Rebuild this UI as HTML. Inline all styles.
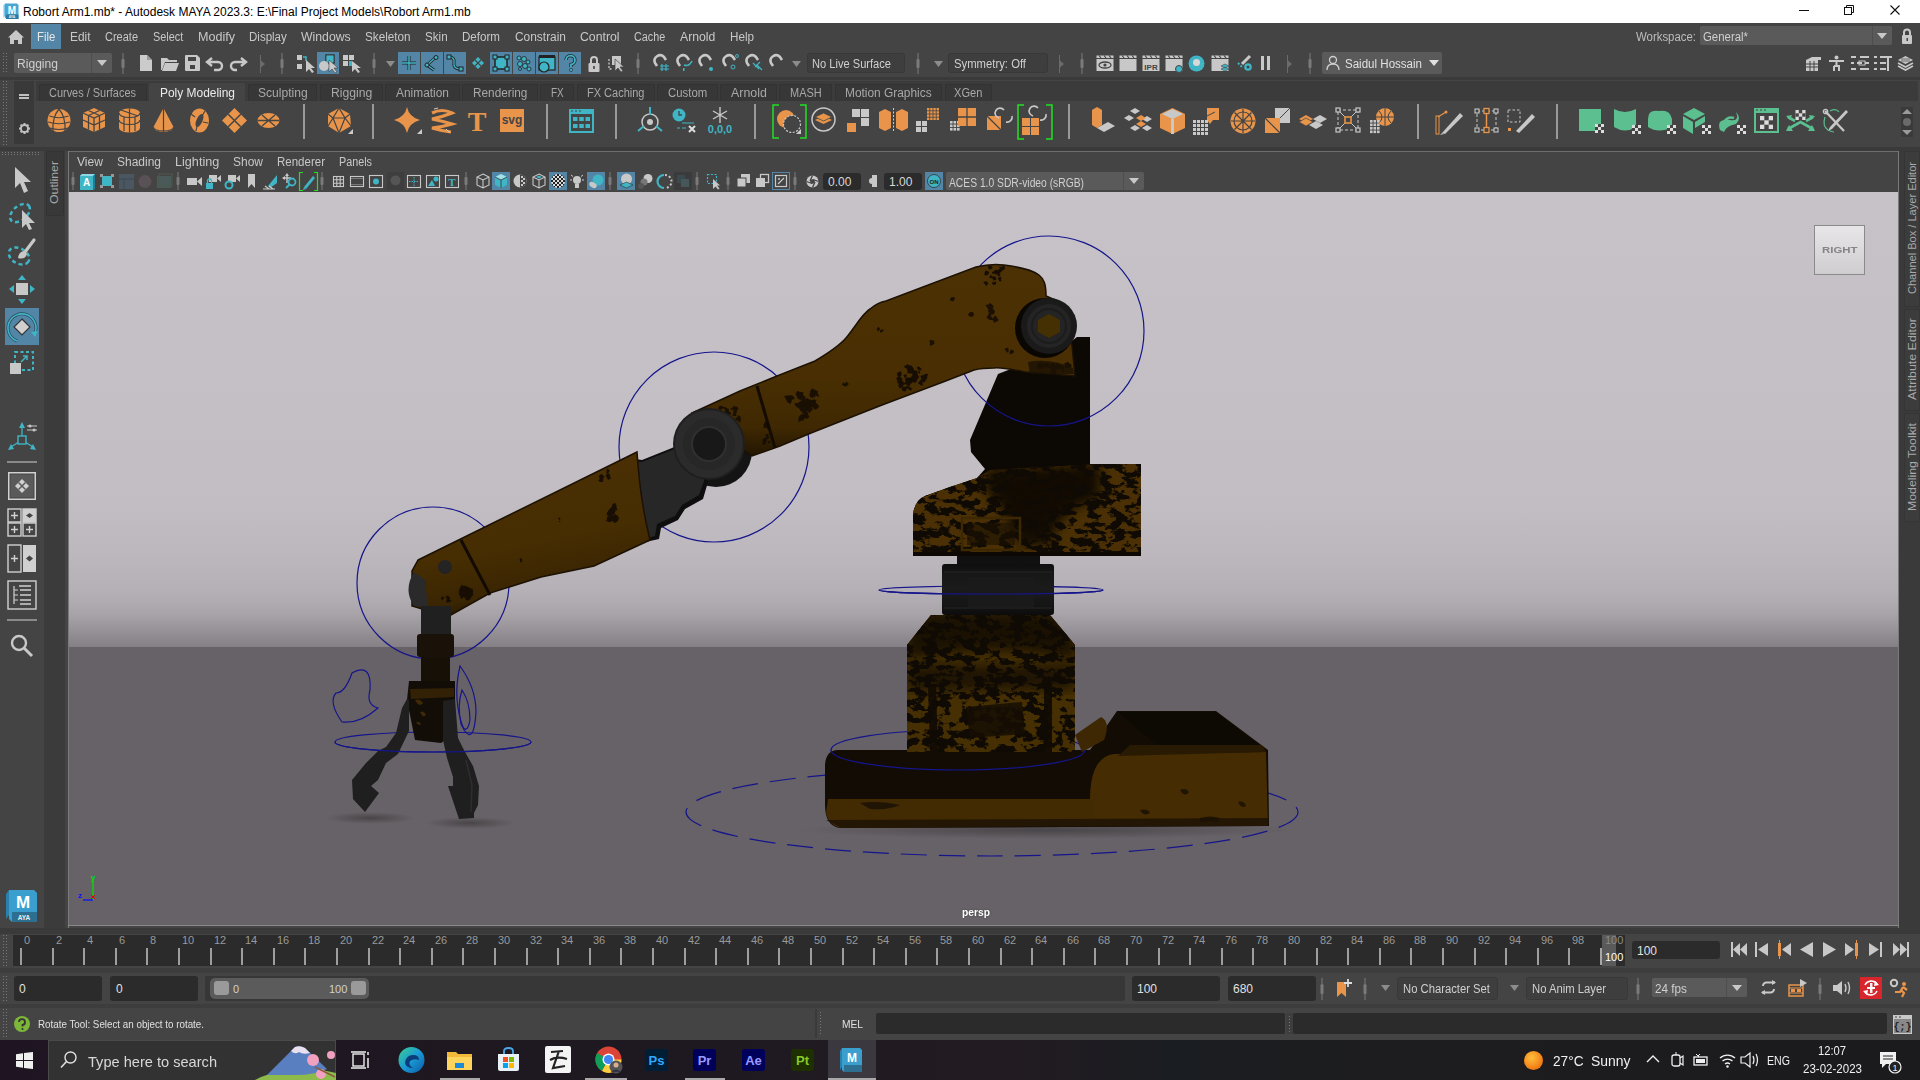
<!DOCTYPE html>
<html><head><meta charset="utf-8">
<style>
*{margin:0;padding:0;box-sizing:border-box}
html,body{width:1920px;height:1080px;overflow:hidden;background:#444;font-family:"Liberation Sans",sans-serif;}
.a{position:absolute}
.t{white-space:nowrap}
svg{display:block;overflow:visible}
</style></head><body>
<div class="a" style="left:0px;top:0px;width:1920px;height:23px;background:#fff;"></div><div class="a" style="left:0px;top:23px;width:1920px;height:55px;background:#444;"></div><div class="a" style="left:0px;top:77px;width:1920px;height:3px;background:#3a3a3a;"></div><div class="a" style="left:0px;top:80px;width:1920px;height:67px;background:#444;"></div><div class="a" style="left:0px;top:147px;width:1920px;height:4px;background:#3a3a3a;"></div><div class="a" style="left:36px;top:81px;width:1882px;height:20px;background:#3b3b3b;"></div><div class="a" style="left:14px;top:81px;width:20px;height:63px;background:#393939;"></div><div class="a" style="left:0px;top:151px;width:43px;height:777px;background:#444;"></div><div class="a" style="left:44px;top:151px;width:21px;height:777px;background:#3b3b3b;"></div><div class="a" style="left:65px;top:151px;width:3px;height:777px;background:#444;"></div><div class="a" style="left:68px;top:151px;width:1832px;height:41px;background:#444;"></div><div class="a" style="left:68px;top:151px;width:1831px;height:1px;background:#6e6e6e;"></div><div class="a" style="left:69px;top:192px;width:1829px;height:455px;background:linear-gradient(#c7c2c7 0px,#c3bec3 300px,#bdb8bd 360px,#b5b0b5 400px,#aaa5aa 420px,#9c979c 434px,#8c878c 448px,#858085 455px)"></div><div class="a" style="left:69px;top:647px;width:1829px;height:278px;background:#676267;"></div><svg class="a" style="left:0;top:0" width="1920" height="1080" viewBox="0 0 1920 1080">
<defs>
<linearGradient id="armg" x1="0" y1="0" x2="0" y2="1">
<stop offset="0" stop-color="#4c3104"/><stop offset="0.6" stop-color="#482e02"/><stop offset="0.85" stop-color="#3f2802"/><stop offset="1" stop-color="#221602"/>
</linearGradient>
<linearGradient id="fg" x1="0" y1="0" x2="0.3" y2="1">
<stop offset="0" stop-color="#4c3104"/><stop offset="0.65" stop-color="#462d02"/><stop offset="0.9" stop-color="#3a2502"/><stop offset="1" stop-color="#221602"/>
</linearGradient>
<linearGradient id="ringg" x1="0" y1="0" x2="0" y2="1">
<stop offset="0" stop-color="#0e0e0e"/><stop offset="0.2" stop-color="#171717"/><stop offset="0.5" stop-color="#1b1b1b"/><stop offset="0.8" stop-color="#151515"/><stop offset="1" stop-color="#0c0c0c"/>
</linearGradient>
<radialGradient id="shad" cx="0.5" cy="0.5" r="0.5"><stop offset="0" stop-color="#000" stop-opacity="0.3"/><stop offset="1" stop-color="#000" stop-opacity="0"/></radialGradient>
<filter id="grm1" x="0" y="0" width="1" height="1" filterUnits="objectBoundingBox" color-interpolation-filters="sRGB">
<feTurbulence type="fractalNoise" baseFrequency="0.08 0.13" numOctaves="4" seed="7" result="n"/>
<feColorMatrix in="n" type="matrix" values="0 0 0 0 0.06  0 0 0 0 0.04  0 0 0 0 0.01  -13 0 0 0 6.9"/>
<feComposite in2="SourceGraphic" operator="in"/>
</filter>
<filter id="grm2" x="0" y="0" width="1" height="1" filterUnits="objectBoundingBox" color-interpolation-filters="sRGB">
<feTurbulence type="fractalNoise" baseFrequency="0.08 0.13" numOctaves="4" seed="3" result="n"/>
<feColorMatrix in="n" type="matrix" values="0 0 0 0 0.06  0 0 0 0 0.04  0 0 0 0 0.01  -13 0 0 0 6.9"/>
<feComposite in2="SourceGraphic" operator="in"/>
</filter>
<filter id="soft" x="-0.2" y="-0.2" width="1.4" height="1.4" color-interpolation-filters="sRGB"><feGaussianBlur stdDeviation="6"/></filter>
<clipPath id="vpclip"><rect x="69" y="192" width="1829" height="733"/></clipPath>
</defs>
<g clip-path="url(#vpclip)">
<ellipse cx="370" cy="818" rx="45" ry="6" fill="url(#shad)"/>
<ellipse cx="470" cy="823" rx="45" ry="6" fill="url(#shad)"/>
<ellipse cx="1045" cy="830" rx="250" ry="9" fill="url(#shad)"/>
<g fill="none" stroke="#15158c" stroke-width="1.2">
<circle cx="714" cy="447" r="95"/>
<circle cx="433" cy="583" r="76"/>
<ellipse cx="992" cy="812" rx="306" ry="44" stroke-dasharray="26 12"/>
<ellipse cx="958" cy="750" rx="127" ry="20"/>
<ellipse cx="991" cy="590" rx="112" ry="4"/>
<ellipse cx="433" cy="742" rx="98" ry="10"/>
<path d="M352 673 Q372 662 370 690 Q366 705 378 708 Q360 724 342 722 Q328 702 336 693 Q345 693 352 673 Z"/>
<path d="M460 666 Q476 688 476 712 Q474 745 464 730 Q452 700 460 666 Z"/><path d="M462 690 Q470 702 470 720 Q467 736 461 724 Q457 705 462 690 Z"/>
</g>
<!-- base plate -->
<path d="M838 750 L1090 750 L1117 711 L1216 711 L1268 750 L1269 826 L840 828 Q825 826 825 805 L825 765 Q826 750 838 750 Z" fill="#120c04"/>
<path d="M1090 800 Q1090 757 1114 754 L1266 752 L1268 826 L1090 826 Z" fill="#452c02"/>
<path d="M828 799 L1095 799 L1095 826 L842 828 Q828 826 826 812 Z" fill="#422a02"/>
<path d="M826 820 L1268 818 L1268 826 L842 828 Z" fill="#1c1206" opacity="0.8"/>
<path d="M1118 712 L1215 712 L1262 748 L1160 748 Z" fill="#0d0903"/>
<path d="M1130 745 L1262 745 L1266 752 L1118 756 Z" fill="#281a03"/>
<path d="M1075 735 L1101 717 Q1111 722 1104 740 L1082 752 Z" fill="#3e2803"/>
<path d="M860 803 Q880 800 900 805 Q890 810 870 809 Z M1180 790 q6 -3 9 2 q-4 6 -9 -2 Z M1238 802 q6 -2 8 4 q-5 3 -8 -4 Z M1140 810 q8 -2 10 3 q-6 4 -10 -3 Z M1200 818 q10 -3 20 0 l-2 4 q-8 -2 -18 0 Z" fill="#1a1005" opacity="0.85"/>
<!-- column -->
<path d="M931 615 L1050 615 L1075 645 L1075 752 L907 752 L907 645 Z" fill="#140d05"/>
<clipPath id="colc"><path d="M931 615 L1050 615 L1075 645 L1075 752 L907 752 L907 645 Z"/></clipPath>
<g clip-path="url(#colc)">
<rect x="907" y="612" width="168" height="140" fill="#463003"/>
<path d="M907 612 H1075 V660 Q990 640 907 660 Z" fill="#100a03" filter="url(#soft)" opacity="0.8"/>
<path d="M907 665 H1075 V690 H907 Z" fill="#100a03" filter="url(#soft)" opacity="0.7"/>
<rect x="907" y="612" width="168" height="140" fill="#000" filter="url(#grm2)"/>
<path d="M928 684 L936 684 L938 752 L930 752 Z M1044 684 L1052 684 L1052 752 L1044 752 Z" fill="#0f0a03" opacity="0.9"/>
<path d="M966 707 L1022 702 L1025 734 L970 738 Z" fill="#160e04" opacity="0.85"/>
</g>
<path d="M831 750 A127 20 0 0 0 1085 750" fill="none" stroke="#15158c" stroke-width="1.2"/>
<!-- ring -->
<rect x="942" y="564" width="112" height="51" rx="3" fill="url(#ringg)"/>
<rect x="957" y="555" width="83" height="10" fill="#101010"/>
<rect x="968" y="577" width="66" height="30" fill="#1a1a1a"/>
<path d="M944 572 H1052 M944 608 H1052" stroke="#262626" stroke-width="1"/>
<path d="M879 590 A112 4 0 0 0 1103 590" fill="none" stroke="#15158c" stroke-width="1.2"/>
<!-- shoulder block -->
<path d="M913 514 Q915 500 925 496 L950 487 L977 478 L985 469 L971 452 L970 440 L998 374 L1060 350 L1077 337 L1090 337 L1090 464 L1141 464 L1141 556 L913 556 Z" fill="#0c0804"/>
<clipPath id="blk"><path d="M913 514 Q915 500 925 496 L950 487 L977 478 L990 470 L1100 464 L1141 464 L1141 556 L913 556 Z"/></clipPath>
<g clip-path="url(#blk)">
<rect x="910" y="460" width="235" height="100" fill="#4a3004"/>
<path d="M985 470 L1100 464 L1100 500 Q1060 505 1050 545 L1020 545 Q1000 500 985 490 Z" fill="#100a03" filter="url(#soft)" opacity="0.95"/>
<rect x="910" y="460" width="235" height="100" fill="#000" filter="url(#grm1)"/>
<rect x="962" y="518" width="58" height="32" fill="none" stroke="#3e2803" stroke-width="2.5"/>
<rect x="967" y="523" width="48" height="22" fill="#1a1104" opacity="0.6"/>
<path d="M913 552 H1141 V556 H913 Z" fill="#0d0803"/>
</g>
<circle cx="1049" cy="331" r="95" fill="none" stroke="#15158c" stroke-width="1.2"/>
<circle cx="716" cy="451" r="36" fill="#141414"/>
<!-- upper arm -->
<path d="M692 413 L740 391 L777 376 L815 361 C830 352 840 345 846 338 C856 326 862 314 870 309 C876 304 880 302 886 301 L923 287 L976 267 C988 264 996 264 1004 265 C1020 267 1032 270 1039 275 C1044 279 1046 284 1046 296 L1060 302 L1072 345 L1075 376 L1025 372 C1010 369 1000 367 994 368 C985 368 978 369 974 370 L943 382 L882 405 L811 433 L780 446 L752 456 Z" fill="url(#armg)" stroke="#1b1104" stroke-width="1.5"/>
<path d="M757 386 L775 448" stroke="#140c03" stroke-width="3"/>
<path d="M907.2 376.0 L906.2 376.8 L905.6 377.6 L904.3 377.8 L904.1 376.5 L903.4 375.3 L904.4 374.5 L905.6 374.5 L906.6 375.0 ZM917.5 372.9 L918.2 376.2 L915.1 377.6 L913.2 374.7 L911.6 373.9 L910.9 371.7 L911.9 368.9 L914.7 370.4 L917.3 370.4 ZM912.8 382.3 L910.5 383.9 L909.3 386.4 L906.9 385.1 L904.4 383.8 L905.4 381.1 L906.2 378.3 L909.4 377.5 L911.9 379.5 ZM922.3 383.0 L923.3 385.4 L920.9 385.5 L919.7 384.3 L918.2 383.8 L918.2 382.2 L919.5 381.4 L921.1 379.4 L921.8 381.9 ZM923.8 377.1 L923.6 378.0 L922.7 378.1 L921.6 378.7 L920.9 377.7 L920.5 376.3 L921.5 375.4 L922.8 375.2 L924.2 375.7 ZM925.7 379.2 L925.6 381.2 L923.8 382.5 L921.7 381.9 L920.2 380.3 L921.9 378.7 L922.1 377.2 L923.5 377.6 L925.2 377.5 ZM916.5 377.3 L917.1 379.8 L914.7 380.8 L912.9 379.4 L909.7 378.9 L912.2 376.7 L912.5 374.6 L914.7 374.0 L916.8 375.1 ZM927.2 377.1 L927.0 379.2 L924.9 379.4 L922.7 380.4 L921.6 378.2 L920.6 375.7 L923.4 375.3 L925.1 374.0 L928.1 374.1 ZM902.6 379.5 L901.5 381.4 L899.8 382.3 L897.3 382.9 L897.2 380.3 L896.2 378.4 L897.7 376.8 L899.9 376.2 L901.4 377.8 ZM901.7 382.1 L901.4 383.7 L899.8 384.2 L898.6 383.5 L897.2 382.9 L897.9 381.5 L898.7 380.8 L899.8 380.2 L901.0 380.8 ZM919.4 377.2 L918.2 378.3 L917.2 379.4 L916.2 378.2 L915.5 377.6 L914.2 376.2 L916.0 375.8 L917.2 375.2 L917.8 376.3 ZM919.9 372.2 L920.2 373.3 L919.1 373.7 L918.6 372.8 L917.3 372.8 L918.2 372.0 L918.3 371.2 L919.1 371.0 L920.0 371.3 ZM904.8 383.1 L904.5 384.7 L903.0 385.0 L902.2 384.0 L900.8 383.8 L901.1 382.6 L901.6 381.3 L903.1 381.0 L903.6 382.4 ZM917.5 379.2 L916.6 381.6 L914.5 383.3 L912.6 381.2 L909.5 380.7 L910.3 377.9 L911.8 375.8 L914.2 376.8 L916.4 376.9 ZM914.2 369.5 L912.2 371.7 L910.0 371.6 L907.2 373.8 L907.5 370.3 L906.4 368.3 L907.8 366.4 L910.4 365.1 L912.7 367.0 ZM919.2 376.3 L917.1 378.3 L915.5 380.7 L912.2 380.6 L911.4 377.5 L912.6 375.5 L913.6 374.4 L915.6 371.3 L916.7 374.6 ZM921.1 369.2 L921.5 370.6 L920.1 370.3 L919.1 370.6 L917.9 370.0 L918.3 368.7 L919.4 368.4 L920.1 368.3 L921.5 367.9 ZM909.8 366.8 L908.3 368.1 L907.1 368.4 L905.9 368.3 L904.6 367.6 L904.0 365.8 L906.0 365.5 L907.3 363.9 L908.9 365.0 ZM914.7 373.4 L914.3 374.1 L913.7 374.7 L913.1 374.0 L912.7 373.7 L912.9 373.2 L912.9 372.4 L913.6 372.7 L914.4 372.7 ZM912.5 372.3 L911.5 373.3 L910.5 373.3 L909.5 373.7 L908.6 372.9 L908.9 371.7 L909.3 370.5 L910.7 370.3 L911.7 371.1 ZM901.4 373.8 L901.5 375.4 L900.2 376.5 L898.2 376.4 L896.9 374.8 L897.0 372.9 L898.7 372.2 L900.1 371.3 L901.5 372.3 ZM920.5 367.7 L920.1 368.9 L918.9 368.8 L917.8 369.3 L916.9 368.3 L917.1 367.1 L918.0 366.4 L918.9 366.8 L919.6 366.9 Z" fill="#130b03" opacity="0.92"/><path d="M912.9 379.5 L913.1 381.5 L911.1 381.5 L909.2 382.1 L909.3 380.1 L907.8 378.5 L909.7 377.8 L911.0 378.0 L912.2 378.3 ZM907.4 379.3 L907.3 380.0 L906.8 380.4 L906.0 380.4 L905.4 379.8 L904.8 378.7 L905.9 378.1 L906.9 377.3 L908.2 378.0 ZM911.9 388.5 L911.7 390.1 L910.1 390.4 L909.1 389.6 L907.9 389.1 L907.9 387.8 L909.1 387.3 L910.0 387.3 L910.8 387.6 ZM909.3 387.1 L908.3 387.9 L907.6 388.3 L906.2 389.1 L905.4 387.8 L905.5 386.4 L906.6 385.9 L907.6 385.8 L908.5 386.2 ZM902.0 385.0 L901.5 385.8 L900.8 386.4 L899.7 386.5 L898.9 385.6 L899.6 384.7 L899.6 383.3 L900.9 383.2 L901.9 383.8 ZM906.2 388.5 L906.5 390.3 L905.0 391.5 L903.0 391.0 L901.4 389.6 L902.2 387.7 L903.1 386.2 L904.7 387.1 L906.5 386.8 ZM903.0 386.2 L901.9 387.2 L901.0 387.7 L899.5 388.5 L899.1 386.8 L897.9 385.2 L899.4 383.9 L901.2 383.8 L903.0 384.4 ZM901.7 383.6 L901.7 384.3 L900.9 384.2 L900.3 384.5 L899.6 384.0 L900.1 383.3 L900.5 383.0 L900.9 382.9 L901.7 382.8 Z" fill="#130b03" opacity="0.92"/><path d="M996.1 283.0 L995.9 284.5 L994.4 284.7 L993.1 284.8 L992.2 283.7 L992.0 282.3 L993.6 282.2 L994.3 281.9 L996.0 281.5 ZM998.0 271.7 L997.9 272.9 L996.8 273.8 L995.6 273.2 L995.0 272.2 L994.3 270.9 L995.2 269.5 L996.8 269.9 L998.4 270.1 ZM1001.5 268.0 L1001.9 269.0 L1000.9 269.2 L1000.0 269.1 L999.7 268.3 L999.1 267.4 L999.9 266.6 L1000.9 266.7 L1002.0 266.9 ZM989.1 273.2 L988.5 274.3 L987.4 274.7 L985.6 275.8 L984.0 274.3 L985.7 272.7 L985.9 271.0 L987.6 270.9 L988.9 271.8 ZM988.7 273.9 L987.8 274.4 L987.4 275.0 L986.6 275.0 L986.1 274.3 L986.2 273.6 L986.7 273.0 L987.5 272.4 L987.8 273.4 ZM988.7 272.4 L988.1 273.7 L986.9 273.8 L985.9 273.7 L984.3 273.3 L985.0 271.9 L985.5 270.6 L986.9 270.8 L988.0 271.3 ZM988.4 283.3 L987.6 284.3 L986.9 285.9 L985.4 285.2 L985.2 283.8 L985.1 282.9 L985.1 280.9 L986.7 281.7 L987.8 282.2 ZM986.1 282.7 L985.9 283.7 L985.0 284.0 L984.2 283.7 L983.8 283.1 L983.3 282.2 L984.2 281.9 L985.0 281.3 L986.1 281.6 ZM1001.0 279.1 L1001.5 280.7 L1000.1 281.7 L998.8 280.5 L998.5 279.5 L997.7 278.4 L998.7 277.5 L1000.1 276.6 L1001.4 277.6 ZM992.7 276.6 L992.2 277.8 L991.1 278.5 L990.1 277.7 L988.7 277.3 L989.8 276.2 L990.1 275.4 L991.1 274.8 L991.5 275.9 ZM994.8 272.8 L994.8 273.6 L994.1 274.3 L993.4 273.5 L992.1 273.4 L991.9 272.1 L993.1 271.5 L994.1 271.3 L995.3 271.6 ZM996.5 279.0 L995.9 279.9 L995.0 280.1 L993.7 280.8 L992.9 279.7 L993.9 278.7 L993.7 277.1 L995.2 276.6 L996.0 278.0 ZM1002.1 270.9 L1000.9 272.1 L999.8 272.5 L998.9 272.1 L997.6 271.6 L998.0 270.3 L998.6 269.2 L999.9 268.7 L1000.7 269.9 ZM992.8 267.7 L991.6 268.8 L990.6 269.3 L989.2 269.7 L988.5 268.4 L987.8 266.8 L989.1 265.6 L990.7 265.8 L991.8 266.5 ZM995.2 277.8 L994.6 278.8 L993.8 279.8 L992.6 279.2 L992.4 278.2 L991.7 277.1 L992.7 276.5 L993.7 276.3 L994.9 276.6 ZM1000.4 274.3 L1000.3 275.6 L999.0 276.2 L997.5 276.2 L997.8 274.6 L997.2 273.7 L998.0 273.1 L998.9 272.9 L999.7 273.4 Z" fill="#130b03" opacity="0.92"/><path d="M1004.8 267.8 L1005.0 269.2 L1003.5 269.2 L1002.6 269.1 L1001.8 268.4 L1002.0 267.4 L1002.2 266.0 L1003.7 265.8 L1004.7 266.6 ZM998.1 272.9 L997.7 274.0 L996.7 274.5 L995.4 274.8 L995.3 273.4 L995.5 272.6 L995.3 271.0 L996.7 271.7 L997.4 272.1 ZM1000.2 272.4 L1000.3 273.0 L999.7 273.3 L999.1 273.0 L997.9 273.0 L998.1 271.9 L999.1 271.6 L999.7 271.4 L1000.9 271.2 ZM1003.9 269.7 L1002.5 270.5 L1001.9 271.4 L1001.2 270.5 L1000.1 270.2 L1000.5 269.3 L1000.9 268.5 L1001.9 268.3 L1002.7 268.7 ZM1004.1 269.2 L1003.9 269.8 L1003.3 270.1 L1002.9 269.7 L1002.6 269.4 L1002.3 268.9 L1002.9 268.8 L1003.2 268.8 L1003.7 268.7 Z" fill="#130b03" opacity="0.92"/><path d="M728.9 411.5 L728.4 412.7 L727.4 414.2 L725.7 413.5 L725.0 412.2 L724.9 410.7 L725.9 409.7 L727.2 409.8 L728.9 409.8 ZM736.6 412.5 L736.3 413.7 L735.1 413.9 L733.7 414.6 L733.3 413.1 L733.3 412.0 L733.4 410.0 L735.2 410.8 L737.1 410.7 ZM730.8 413.1 L731.2 414.6 L729.6 414.6 L728.4 414.7 L728.1 413.5 L728.2 412.7 L728.5 411.6 L729.6 412.0 L730.7 411.9 ZM735.1 415.0 L735.1 415.9 L734.2 416.0 L733.4 416.0 L732.3 415.6 L732.3 414.4 L733.5 414.2 L734.3 413.4 L735.2 414.0 ZM726.0 408.1 L726.3 409.2 L725.3 409.8 L724.1 409.6 L723.6 408.6 L722.9 407.3 L724.3 406.9 L725.2 407.0 L726.0 407.2 ZM738.4 408.3 L737.5 410.2 L735.6 410.4 L734.2 410.1 L732.4 409.3 L732.7 407.3 L733.8 405.8 L735.5 406.7 L737.1 406.7 ZM733.3 408.9 L732.7 409.7 L732.0 410.0 L731.2 409.9 L730.9 409.2 L730.9 408.6 L731.4 408.2 L732.0 407.8 L732.4 408.4 ZM736.2 414.6 L736.5 416.0 L735.2 416.0 L734.1 416.1 L733.7 415.1 L733.1 414.0 L734.3 413.6 L735.2 413.1 L736.1 413.7 ZM728.7 414.4 L728.1 415.9 L726.7 416.4 L725.7 415.5 L725.2 414.8 L725.1 414.0 L725.4 412.8 L726.6 412.8 L728.3 412.8 ZM723.2 408.1 L721.9 408.8 L721.3 409.8 L720.0 409.7 L718.5 408.9 L718.6 407.2 L719.6 405.7 L721.4 406.0 L723.1 406.2 ZM727.8 409.3 L727.3 410.1 L726.6 410.5 L725.6 410.6 L725.3 409.7 L725.6 409.0 L725.8 408.2 L726.7 407.9 L727.0 408.8 ZM736.9 410.3 L736.9 411.2 L736.0 411.3 L735.5 411.0 L734.7 410.8 L735.3 410.1 L735.3 409.3 L736.0 409.4 L736.7 409.6 ZM728.7 409.2 L728.0 410.0 L727.3 410.2 L726.5 410.4 L725.7 409.7 L726.4 409.0 L726.6 408.2 L727.3 408.4 L728.3 408.3 ZM719.8 413.7 L719.4 414.9 L718.2 415.1 L717.0 415.2 L716.7 414.1 L716.4 413.1 L716.9 411.9 L718.3 411.6 L719.1 412.6 Z" fill="#130b03" opacity="0.85"/><path d="M741.0 418.5 L740.9 419.8 L739.8 421.4 L738.3 420.1 L737.2 419.2 L737.8 417.9 L737.7 415.8 L739.8 415.4 L740.5 417.5 ZM733.1 424.5 L732.2 425.3 L731.5 426.0 L730.7 425.4 L730.2 424.8 L730.4 424.1 L730.5 423.1 L731.5 422.9 L732.5 423.4 ZM740.5 421.1 L740.7 422.2 L739.5 422.1 L738.9 422.0 L738.3 421.5 L738.0 420.6 L738.9 420.3 L739.5 420.3 L740.5 420.2 ZM736.3 426.6 L736.1 426.9 L735.9 427.2 L735.3 427.4 L734.8 426.9 L734.9 426.3 L735.4 426.0 L735.9 425.9 L736.5 426.0 ZM735.0 423.0 L734.8 424.1 L733.7 424.5 L732.3 425.0 L731.7 423.6 L732.3 422.6 L732.9 422.1 L733.8 421.0 L734.3 422.2 ZM738.0 419.4 L738.0 420.6 L736.9 420.4 L736.0 420.6 L735.1 420.0 L735.6 419.0 L735.6 417.6 L737.1 417.3 L738.3 418.1 ZM741.4 433.8 L740.4 434.8 L739.5 434.8 L738.2 435.7 L737.3 434.6 L738.2 433.4 L738.6 432.6 L739.5 432.6 L740.7 432.6 ZM732.4 431.3 L732.4 431.9 L731.8 432.0 L731.4 431.7 L731.3 431.4 L730.9 431.0 L731.5 430.9 L731.8 430.7 L732.3 430.8 Z" fill="#130b03" opacity="0.85"/><path d="M769.5 427.1 L768.5 427.9 L767.9 429.6 L766.8 428.2 L766.0 427.6 L766.2 426.6 L766.3 425.0 L767.9 424.4 L769.2 425.6 ZM767.0 440.3 L766.5 441.3 L765.6 442.6 L763.8 442.8 L762.6 441.2 L762.7 439.3 L764.0 438.2 L765.5 438.8 L767.0 438.8 ZM768.3 435.3 L768.8 436.6 L767.4 436.2 L766.7 436.4 L766.1 435.7 L765.4 434.6 L766.8 434.5 L767.5 433.8 L768.8 434.0 ZM770.3 442.3 L770.0 443.0 L769.3 443.4 L768.6 443.2 L768.4 442.5 L767.4 441.6 L768.3 440.9 L769.4 440.8 L770.1 441.4 ZM767.8 425.4 L766.6 426.8 L765.5 428.0 L763.5 428.1 L763.8 425.9 L763.2 424.7 L764.0 423.7 L765.3 423.6 L766.7 423.9 ZM767.9 422.9 L767.9 424.6 L766.2 424.3 L765.1 424.4 L764.0 423.6 L764.8 422.5 L765.0 421.3 L766.2 421.5 L767.4 421.7 ZM767.1 438.7 L767.2 439.7 L766.2 440.1 L765.4 439.7 L764.2 439.3 L764.4 438.1 L765.5 438.0 L766.2 437.2 L767.0 437.8 ZM766.2 443.3 L765.1 444.3 L764.1 444.8 L763.3 444.3 L762.1 444.0 L762.3 442.7 L763.3 442.3 L764.2 441.2 L765.2 442.2 ZM765.7 443.5 L764.8 444.3 L764.0 444.3 L763.2 444.7 L762.7 443.9 L762.3 442.9 L763.2 442.4 L764.1 442.4 L764.8 442.7 ZM769.6 437.5 L768.8 438.4 L768.0 438.6 L766.8 439.4 L766.4 438.0 L765.4 436.7 L766.9 436.0 L768.3 434.9 L768.7 436.8 Z" fill="#130b03" opacity="0.85"/>


<path d="M995.0 311.2 L994.3 313.4 L992.4 314.8 L990.5 313.3 L988.5 312.4 L988.1 309.9 L989.6 307.5 L992.1 309.0 L993.9 309.4 ZM991.2 316.2 L992.6 318.8 L990.2 320.1 L987.9 319.0 L986.6 317.3 L987.7 315.5 L988.7 314.8 L990.0 313.3 L990.9 315.1 ZM991.3 304.8 L991.0 305.5 L990.4 306.3 L989.6 305.9 L988.9 305.3 L989.1 304.4 L989.5 303.7 L990.3 303.7 L990.9 304.2 ZM998.8 319.9 L997.0 321.6 L995.4 322.3 L993.7 322.2 L993.1 320.6 L991.3 318.6 L993.5 317.4 L995.7 315.8 L997.2 318.1 ZM995.6 316.9 L995.9 317.9 L994.9 318.0 L994.0 318.3 L993.8 317.3 L994.1 316.7 L994.1 315.9 L995.0 315.6 L995.4 316.4 ZM993.8 306.7 L991.3 308.1 L990.0 309.3 L988.4 308.6 L987.5 307.4 L985.4 305.1 L988.3 304.5 L990.2 303.0 L992.1 304.5 ZM991.7 314.6 L990.9 315.2 L990.4 315.9 L989.6 315.5 L989.1 315.0 L988.3 314.0 L989.2 313.1 L990.3 313.5 L991.6 313.4 ZM993.9 307.9 L991.9 309.2 L991.1 312.5 L989.1 310.0 L987.9 308.8 L986.5 306.5 L988.9 305.5 L990.7 305.3 L991.8 306.6 Z" fill="#130b03" opacity="0.85"/><path d="M954.5 299.5 L953.9 300.3 L953.3 301.6 L951.9 301.1 L950.0 300.5 L950.2 298.5 L951.6 297.2 L953.3 297.0 L955.0 297.7 ZM953.4 298.8 L952.2 299.3 L951.9 300.5 L951.2 299.5 L950.2 299.3 L950.5 298.4 L951.0 297.8 L951.9 297.1 L952.2 298.3 Z" fill="#130b03" opacity="0.85"/><path d="M974.0 315.6 L972.4 316.5 L971.6 317.1 L970.6 316.8 L969.8 316.1 L968.9 314.7 L970.6 314.3 L971.7 313.4 L972.5 314.5 ZM974.0 314.8 L972.4 315.7 L971.7 316.7 L970.6 316.2 L968.4 315.9 L968.5 313.8 L969.9 312.2 L971.9 311.8 L973.6 312.9 Z" fill="#130b03" opacity="0.85"/><path d="M934.7 343.6 L933.1 344.7 L932.1 345.2 L930.6 345.7 L929.6 344.4 L930.2 343.0 L930.6 341.5 L932.1 341.8 L933.8 342.0 ZM934.1 342.2 L933.4 343.4 L932.4 345.3 L930.5 344.6 L930.2 342.8 L929.4 341.3 L930.4 339.7 L932.2 340.4 L934.0 340.3 Z" fill="#130b03" opacity="0.85"/><path d="M817.8 393.3 L819.5 397.1 L815.4 395.6 L812.3 398.0 L810.6 395.0 L810.0 391.5 L812.1 388.3 L815.6 390.3 L817.7 391.1 ZM809.6 401.4 L810.3 403.4 L808.4 404.6 L806.3 404.0 L806.1 402.0 L804.7 400.3 L806.6 399.3 L808.1 399.6 L809.6 399.9 ZM802.8 395.4 L802.6 397.7 L800.6 400.1 L797.8 398.7 L796.8 396.4 L795.5 393.8 L797.3 391.1 L800.3 392.0 L803.4 392.3 ZM791.4 397.2 L790.4 398.8 L789.0 399.7 L787.7 398.7 L786.6 397.9 L785.9 396.3 L787.9 396.0 L788.8 395.9 L789.5 396.4 ZM804.2 418.2 L803.7 420.4 L801.5 420.6 L798.7 422.3 L798.3 419.2 L798.7 417.3 L799.7 415.8 L801.9 413.9 L803.3 416.4 ZM815.2 403.1 L816.5 405.7 L814.0 406.8 L811.9 405.6 L811.5 403.8 L810.5 402.1 L812.0 400.8 L814.0 399.2 L816.5 400.4 ZM810.9 401.6 L810.5 403.1 L808.9 402.7 L807.9 403.0 L807.2 402.2 L806.6 400.8 L808.3 400.8 L808.9 400.6 L810.4 400.2 ZM808.5 406.9 L807.7 410.0 L804.5 410.1 L802.6 409.2 L801.7 407.7 L800.6 405.7 L801.6 402.8 L804.6 403.2 L806.7 404.5 ZM808.3 414.2 L808.8 417.1 L806.1 418.6 L802.9 418.3 L800.8 415.8 L803.4 413.5 L803.3 410.6 L805.9 411.1 L807.8 412.1 ZM805.9 397.3 L804.0 398.6 L803.1 400.5 L801.1 399.7 L800.7 398.0 L800.7 396.6 L801.2 395.1 L803.0 394.6 L804.1 396.0 ZM795.0 398.2 L791.9 400.0 L790.7 403.9 L787.3 402.3 L786.1 399.5 L784.0 396.1 L788.2 395.6 L790.2 395.3 L792.6 395.7 ZM813.0 409.4 L810.9 411.3 L809.3 413.3 L807.8 411.0 L804.9 410.8 L806.6 408.7 L806.9 406.3 L809.4 405.4 L811.4 407.1 ZM807.8 409.5 L806.6 411.5 L805.0 413.7 L802.1 413.1 L801.7 410.4 L800.3 408.1 L802.2 406.1 L804.7 406.7 L807.9 406.4 ZM816.2 403.2 L813.7 406.5 L810.5 407.2 L808.0 406.3 L807.0 404.2 L806.4 401.9 L806.6 397.6 L810.3 400.5 L814.5 399.2 ZM809.6 416.5 L808.6 417.4 L807.9 418.6 L806.4 418.5 L805.5 417.3 L805.7 415.9 L806.3 414.4 L807.8 415.1 L808.5 415.7 ZM815.0 394.7 L815.2 397.2 L812.7 397.2 L810.7 397.4 L809.5 395.7 L809.5 393.7 L810.8 392.2 L812.7 391.9 L814.7 392.6 ZM806.8 405.7 L802.9 408.0 L801.2 412.1 L798.8 408.0 L796.4 407.1 L794.1 403.5 L798.5 402.8 L801.0 400.4 L805.3 401.4 ZM806.7 406.8 L806.3 407.8 L805.5 408.8 L804.4 408.0 L803.2 407.5 L803.8 406.3 L804.2 405.2 L805.5 404.9 L806.0 406.1 ZM819.2 406.5 L817.3 408.7 L815.3 409.7 L813.5 408.5 L812.5 407.3 L811.1 405.2 L813.1 403.8 L815.3 403.0 L817.5 404.1 ZM811.4 402.7 L809.5 404.7 L808.1 408.5 L804.1 408.0 L804.3 403.7 L801.5 400.6 L804.5 398.2 L807.7 399.2 L810.8 399.6 Z" fill="#130b03" opacity="0.85"/><path d="M845.4 384.9 L845.1 385.7 L844.4 386.4 L843.6 385.8 L842.8 385.4 L843.5 384.6 L843.6 383.9 L844.4 383.8 L844.9 384.3 ZM849.2 383.9 L847.6 384.8 L846.9 386.4 L845.2 386.0 L844.4 384.6 L845.4 383.5 L845.5 382.3 L846.8 381.8 L847.7 382.9 ZM844.7 383.9 L844.1 384.5 L843.5 384.9 L842.7 384.9 L841.9 384.4 L842.5 383.6 L843.0 383.3 L843.6 382.3 L844.4 383.0 Z" fill="#130b03" opacity="0.85"/><path d="M1055.6 370.5 L1056.1 373.2 L1053.5 374.5 L1050.8 373.9 L1050.6 371.2 L1050.9 369.8 L1051.2 367.7 L1053.5 366.3 L1054.9 368.7 ZM1056.5 366.5 L1054.3 368.4 L1052.9 371.1 L1051.1 368.2 L1048.2 367.9 L1048.0 365.1 L1050.9 364.6 L1052.7 362.8 L1054.6 364.4 ZM1071.7 365.7 L1070.5 367.4 L1068.7 367.7 L1067.6 367.0 L1065.2 366.8 L1066.1 364.9 L1066.6 362.6 L1068.7 364.0 L1070.8 363.7 ZM1064.3 371.4 L1063.8 371.8 L1063.5 372.7 L1062.8 372.2 L1061.8 371.9 L1062.3 371.0 L1062.6 370.1 L1063.5 369.9 L1063.9 370.8 ZM1056.2 371.7 L1055.5 372.9 L1054.6 374.6 L1053.2 373.2 L1051.6 372.6 L1051.7 370.8 L1052.8 369.5 L1054.3 370.1 L1056.1 369.9 ZM1069.6 366.6 L1068.6 367.9 L1067.3 368.1 L1066.5 367.5 L1064.8 367.4 L1065.4 366.0 L1066.1 364.9 L1067.3 365.0 L1068.6 365.2 ZM1062.1 366.5 L1061.6 367.6 L1060.4 367.2 L1059.6 367.6 L1058.9 367.0 L1059.2 366.1 L1059.5 365.2 L1060.6 364.7 L1061.3 365.6 ZM1049.3 365.6 L1049.0 366.3 L1048.3 366.8 L1047.0 367.5 L1046.4 366.2 L1046.0 364.8 L1046.9 363.5 L1048.5 363.4 L1048.9 364.9 ZM1071.3 364.7 L1070.0 367.0 L1067.8 367.5 L1066.4 366.4 L1065.5 365.4 L1064.1 363.6 L1066.2 362.7 L1067.9 361.7 L1069.2 363.2 ZM1042.8 366.4 L1041.9 368.1 L1040.4 369.2 L1038.4 369.0 L1037.1 367.4 L1037.3 365.4 L1037.8 362.8 L1040.5 362.9 L1041.6 364.9 ZM1046.6 365.5 L1047.3 367.1 L1045.8 367.6 L1044.5 367.1 L1042.9 366.4 L1043.9 364.9 L1044.4 363.7 L1045.9 362.8 L1047.1 364.2 ZM1060.5 366.9 L1058.3 368.9 L1056.6 370.0 L1054.1 370.3 L1052.6 368.2 L1052.6 365.7 L1054.8 364.7 L1056.7 363.2 L1059.3 364.2 ZM1063.8 367.6 L1063.3 369.1 L1061.9 369.7 L1060.9 368.7 L1059.9 368.2 L1058.6 366.5 L1060.1 365.1 L1061.9 365.5 L1063.6 365.9 ZM1044.4 366.1 L1042.7 367.0 L1042.0 368.4 L1040.0 368.9 L1039.1 367.0 L1038.4 365.0 L1040.8 364.8 L1042.2 362.9 L1044.0 364.1 Z" fill="#130b03" opacity="0.85"/><path d="M1008.3 351.3 L1008.4 352.1 L1007.7 352.5 L1006.9 352.3 L1006.4 351.7 L1006.6 351.0 L1007.0 350.5 L1007.7 349.9 L1008.2 350.6 ZM1014.2 352.3 L1012.6 353.3 L1011.7 353.8 L1010.2 354.4 L1009.4 353.0 L1010.0 351.8 L1010.2 350.3 L1011.9 349.6 L1013.4 350.6 ZM1008.7 348.4 L1008.1 348.7 L1007.9 349.2 L1007.4 349.0 L1007.0 348.6 L1007.1 348.2 L1007.3 347.6 L1007.9 347.7 L1008.2 348.0 ZM1008.4 349.8 L1008.8 351.4 L1007.3 352.2 L1006.2 351.1 L1005.4 350.4 L1004.6 349.0 L1005.9 348.1 L1007.3 347.9 L1008.5 348.5 Z" fill="#130b03" opacity="0.85"/><path d="M883.7 330.7 L882.5 331.5 L881.9 332.4 L880.6 332.5 L879.7 331.4 L880.1 330.2 L881.1 329.8 L881.9 329.4 L883.3 329.4 ZM880.1 329.3 L879.4 330.1 L878.7 330.7 L877.2 331.3 L877.0 329.8 L876.9 328.7 L877.4 327.6 L878.8 327.1 L879.7 328.2 Z" fill="#130b03" opacity="0.85"/>
<path d="M1028 362 Q1050 358 1073 368 L1074 374 L1030 374 Z" fill="#1a1004" opacity="0.8"/>
<!-- shoulder joint disc -->
<circle cx="1045" cy="328" r="30" fill="#0a0703"/>
<circle cx="1049" cy="326" r="28" fill="#1a1a1a"/>
<circle cx="1049" cy="326" r="22" fill="#242424"/>
<circle cx="1049" cy="326" r="17" fill="none" stroke="#1c1c1c" stroke-width="2"/>
<polygon points="1049,314 1060,320 1060,332 1049,338 1038,332 1038,320" fill="#443003"/>
<!-- elbow connector -->
<path d="M628 458 L642 460 L672 448 L712 425 L708 482 L703 499 L685 509 L678 520 L661 528 L659 539 L632 545 Z" fill="#0e0e0e"/><path d="M630 460 L642 462 L672 450 L710 430 L704 481 L699 495 L682 505 L675 516 L657 524 L655 536 L634 542 Z" fill="#272727"/>
<!-- forearm -->
<path d="M418 560 L637 452 Q640 500 650 540 L594 566 L541 577 L490 593 L451 615 L439 614 L412 606 L412 571 Z" fill="url(#fg)" stroke="#1b1104" stroke-width="1.5"/>
<path d="M461 540 L490 595" stroke="#120b03" stroke-width="3"/>
<path d="M603.4 479.5 L603.3 481.2 L601.8 481.9 L599.9 482.1 L598.2 480.6 L599.8 478.9 L600.6 478.2 L601.9 476.1 L603.2 477.9 ZM609.9 471.0 L608.7 472.0 L608.1 473.7 L606.3 473.3 L606.6 471.4 L606.6 470.6 L606.6 469.3 L608.1 468.4 L608.9 469.9 ZM602.9 475.2 L602.9 475.8 L602.3 476.2 L601.8 475.9 L601.4 475.5 L601.5 475.0 L601.7 474.4 L602.3 474.4 L602.6 474.8 ZM610.1 476.6 L611.0 478.7 L608.9 479.6 L607.6 477.9 L606.5 477.3 L605.7 475.6 L607.0 474.1 L608.9 473.3 L610.1 475.2 ZM610.0 477.7 L610.0 479.1 L608.7 479.8 L607.5 479.1 L606.7 478.3 L607.4 477.4 L607.7 476.6 L608.7 475.7 L609.4 476.7 ZM604.6 476.5 L603.4 477.9 L602.1 478.8 L600.5 478.7 L598.8 477.6 L599.3 475.6 L600.6 474.5 L602.2 474.1 L602.8 475.6 Z" fill="#130b03" opacity="0.9"/><path d="M615.6 521.1 L616.2 522.3 L615.0 522.9 L613.8 522.6 L613.5 521.5 L613.1 520.5 L613.8 519.6 L614.9 519.4 L615.5 520.4 ZM615.7 511.1 L614.3 514.3 L611.1 514.8 L608.7 514.1 L607.7 512.1 L608.4 510.4 L609.4 509.3 L611.1 507.6 L612.8 509.1 ZM613.2 520.1 L611.8 521.5 L610.3 521.8 L608.8 522.3 L608.1 520.7 L607.2 519.0 L607.9 516.3 L610.6 516.6 L611.7 518.7 ZM619.1 518.3 L617.6 521.2 L614.9 522.9 L612.6 521.1 L609.2 520.1 L609.3 516.6 L612.9 516.1 L614.9 513.9 L617.5 515.5 ZM614.7 513.5 L612.9 515.4 L611.3 517.2 L609.4 515.7 L607.0 514.9 L607.0 512.2 L609.3 511.1 L611.2 510.5 L613.7 511.0 ZM614.5 512.8 L614.6 514.3 L613.0 514.2 L611.4 515.2 L611.3 513.3 L610.2 511.8 L611.9 511.3 L613.3 509.9 L614.6 511.2 ZM614.7 513.3 L613.2 515.1 L611.5 515.8 L609.3 516.3 L606.6 514.9 L607.5 512.0 L610.0 511.5 L611.8 509.0 L614.2 510.7 ZM616.5 507.4 L617.5 510.1 L614.8 510.4 L612.9 509.9 L609.6 509.1 L612.0 506.6 L612.4 504.2 L615.1 502.7 L616.5 505.6 ZM611.9 519.9 L609.9 520.9 L609.1 522.2 L607.7 521.5 L605.8 520.9 L607.1 519.3 L606.8 516.6 L609.0 518.3 L611.2 517.8 Z" fill="#130b03" opacity="0.9"/><path d="M464.8 593.4 L464.3 595.0 L462.6 594.7 L461.7 594.5 L459.6 594.4 L460.7 592.7 L461.5 591.9 L462.9 590.1 L464.0 591.9 ZM472.8 592.8 L473.3 595.0 L471.4 596.8 L469.2 595.5 L467.3 594.1 L467.4 591.6 L469.8 591.2 L471.4 589.1 L473.2 590.7 ZM466.8 589.2 L466.6 592.1 L464.1 594.1 L461.0 593.0 L458.5 591.0 L460.1 588.1 L460.9 585.2 L463.8 585.8 L467.1 586.0 ZM472.5 589.8 L473.0 591.2 L471.6 591.3 L470.4 591.3 L470.1 590.2 L469.8 589.2 L470.6 588.5 L471.5 588.4 L472.6 588.7 ZM471.5 596.2 L470.4 598.9 L468.0 600.7 L465.4 599.4 L465.1 597.0 L463.3 594.8 L465.0 592.4 L467.9 592.0 L469.7 594.1 ZM472.8 590.7 L471.2 592.5 L469.4 592.8 L466.6 594.8 L464.2 592.4 L466.9 589.9 L466.7 586.8 L469.6 587.5 L470.9 589.1 ZM465.3 595.2 L466.2 597.8 L463.5 597.3 L460.9 599.0 L460.2 596.2 L458.5 593.5 L460.5 590.6 L463.8 591.5 L467.2 591.7 ZM465.0 589.6 L465.0 591.0 L463.8 592.3 L461.7 592.4 L461.4 590.3 L461.7 589.0 L461.4 586.3 L463.8 587.2 L466.5 587.0 Z" fill="#130b03" opacity="0.9"/><path d="M444.0 598.0 L443.6 598.6 L443.1 599.4 L441.8 599.9 L441.0 598.7 L441.1 597.4 L442.3 597.0 L443.2 596.4 L443.8 597.2 ZM444.1 598.0 L443.6 599.0 L442.6 599.6 L441.6 599.4 L441.6 598.3 L441.4 597.7 L441.7 596.9 L442.6 596.6 L443.6 597.0 ZM450.3 597.9 L449.5 599.2 L448.3 599.3 L447.1 599.6 L446.9 598.4 L445.5 597.0 L446.7 595.7 L448.4 595.9 L449.3 596.9 ZM451.5 600.4 L450.2 602.0 L448.7 602.6 L446.9 602.7 L446.1 601.2 L446.6 599.8 L447.2 598.6 L448.8 597.2 L449.4 599.4 Z" fill="#130b03" opacity="0.9"/><path d="M522.1 561.3 L521.7 561.7 L521.4 562.6 L520.6 562.3 L519.8 561.8 L520.2 560.9 L520.5 560.1 L521.3 560.4 L522.3 560.3 ZM522.3 559.7 L521.6 560.2 L521.1 560.9 L520.1 561.0 L520.0 560.0 L519.5 559.1 L520.2 558.4 L521.2 558.1 L521.7 559.0 Z" fill="#130b03" opacity="0.9"/><path d="M560.1 518.6 L560.4 519.5 L559.5 519.8 L558.9 519.3 L558.0 519.1 L558.5 518.3 L558.7 517.5 L559.4 517.8 L560.0 518.0 ZM560.2 521.3 L560.3 521.8 L559.9 522.3 L559.3 522.0 L559.1 521.5 L558.8 521.0 L559.5 520.9 L559.9 520.4 L560.1 520.9 Z" fill="#130b03" opacity="0.9"/>
<circle cx="445" cy="567" r="7" fill="#242424"/>
<path d="M414 572 Q403 590 414 606 L428 608 L425 580 Z" fill="#2a2a2a"/>
<!-- elbow disc -->
<circle cx="709" cy="444" r="36" fill="#1f1f1f"/>
<circle cx="709" cy="444" r="34" fill="#2b2b2b"/>
<circle cx="709" cy="444" r="26" fill="#272727"/>
<circle cx="709" cy="444" r="18" fill="#303030"/><circle cx="709" cy="444" r="16" fill="#181818"/>
<!-- wrist stem & claw -->
<rect x="421" y="606" width="30" height="28" fill="#202020"/>
<rect x="417" y="634" width="37" height="23" rx="3" fill="#1a1208"/>
<rect x="421" y="657" width="29" height="26" fill="#161007"/>
<path d="M409 681 L455 681 L455 705 L452 735 L441 743 L415 740 L407 700 Z" fill="#120d07"/>
<path d="M410 689 L454 688 L454 697 L411 699 Z" fill="#3e2805" opacity="0.75"/><path d="M415 700 q5 -2 8 3 q-4 5 -8 -3 Z M420 712 q4 -2 6 3 q-3 4 -6 -3 Z M416 722 q3 -1 5 2 q-2 3 -5 -2 Z" fill="#4a3006" opacity="0.8"/>
<path d="M407 699 L409 700 L409 731 L398 754 L386 763 L378 780 L371 786 L379 793 L365 812 L353 799 L352 780 L366 763 L378 751 L386 747 L396 733 L402 708 Z" fill="#1f1f1f"/>
<path d="M443 701 L455 699 L458 738 L465 752 L473 766 L479 786 L478 805 L474 813 L474 818 L459 819 L448 786 L453 786 L453 777 L447 758 L443 740 Z" fill="#1f1f1f"/><path d="M466 760 L472 785 L471 812" fill="none" stroke="#2e2e2e" stroke-width="1.5"/>
<path d="M335 742 A98 10 0 0 0 531 742" fill="none" stroke="#15158c" stroke-width="1.2"/>
</g>
</svg>
<div class="a" style="left:68px;top:151px;width:1px;height:777px;background:#7a7a7a;"></div><div class="a" style="left:1898px;top:151px;width:1px;height:777px;background:#7a7a7a;"></div><div class="a" style="left:68px;top:925px;width:1831px;height:1px;background:#8a8a8a;"></div><div class="a" style="left:1899px;top:151px;width:21px;height:777px;background:#3a3a3a;"></div><div class="a" style="left:0px;top:928px;width:1920px;height:6px;background:#3a3a3a;"></div><div class="a" style="left:0px;top:934px;width:1920px;height:106px;background:#444;"></div><div class="a" style="left:0px;top:968px;width:1920px;height:5px;background:#3d3d3d;"></div><div class="a" style="left:0px;top:1004px;width:1920px;height:4px;background:#3d3d3d;"></div><div class="a" style="left:0;top:1040px;width:1920px;height:40px;background:linear-gradient(90deg,#1f1522 0px,#1e1920 700px,#221b22 1010px,#1a1d21 1170px,#1d1d1f 1350px,#1b1b1d 1920px)"></div><svg class="a" style="left:2px;top:3px;" width="17" height="17" viewBox="0 0 17 17"><path d="M3 0.5 L15 0.5 L16.5 2 L16.5 16 L4.5 16 L3 14.5 Z" fill="#49a6d2"/><path d="M1.5 2.5 L3 0.5 L3 13 L1.5 15 Z" fill="#7cc6e8"/><rect x="4" y="11.5" width="12.5" height="4.5" fill="#2d7ba3"/><text x="10" y="10.5" font-size="10" font-weight="bold" fill="#fff" text-anchor="middle" font-family="Liberation Sans">M</text><text x="10" y="15.3" font-size="3.5" font-weight="bold" fill="#dbeef8" text-anchor="middle" font-family="Liberation Sans">AYA</text></svg><div class="a t" style="left:23px;top:5.84px;font-size:12px;line-height:12px;color:#000;">Robort Arm1.mb* - Autodesk MAYA 2023.3: E:\Final Project Models\Robort Arm1.mb</div><svg class="a" style="left:1799px;top:10px;" width="10" height="1" viewBox="0 0 10 1"><rect width="10" height="1" fill="#111"/></svg><svg class="a" style="left:1844px;top:5px;" width="10" height="10" viewBox="0 0 10 10"><rect x="0.5" y="2.5" width="7" height="7" fill="none" stroke="#111"/><path d="M2.5 2.5 V0.5 H9.5 V7.5 H7.5" fill="none" stroke="#111"/></svg><svg class="a" style="left:1890px;top:5px;" width="10" height="10" viewBox="0 0 10 10"><path d="M0.5 0.5 L9.5 9.5 M9.5 0.5 L0.5 9.5" stroke="#111" stroke-width="1.1"/></svg><svg class="a" style="left:8px;top:30px;" width="16" height="15" viewBox="0 0 16 15"><polygon points="8,0 16,7.5 14,7.5 14,14 10,14 10,10 6,10 6,14 2,14 2,7.5 0,7.5" fill="#c8c8c8"/></svg><div class="a" style="left:31px;top:24px;width:30px;height:25px;background:#5285a6;"></div><div class="a t" style="left:37px;top:30.84px;font-size:12px;line-height:12px;color:#e6e6e6;;transform-origin:0 0;transform:scaleX(0.9460)">File</div><div class="a t" style="left:70px;top:30.84px;font-size:12px;line-height:12px;color:#c8c8c8;;transform-origin:0 0;transform:scaleX(0.9909)">Edit</div><div class="a t" style="left:105px;top:30.84px;font-size:12px;line-height:12px;color:#c8c8c8;;transform-origin:0 0;transform:scaleX(0.9159)">Create</div><div class="a t" style="left:153px;top:30.84px;font-size:12px;line-height:12px;color:#c8c8c8;;transform-origin:0 0;transform:scaleX(0.9053)">Select</div><div class="a t" style="left:198px;top:30.84px;font-size:12px;line-height:12px;color:#c8c8c8;;transform-origin:0 0;transform:scaleX(1.0469)">Modify</div><div class="a t" style="left:249px;top:30.84px;font-size:12px;line-height:12px;color:#c8c8c8;;transform-origin:0 0;transform:scaleX(0.9604)">Display</div><div class="a t" style="left:301px;top:30.84px;font-size:12px;line-height:12px;color:#c8c8c8;;transform-origin:0 0;transform:scaleX(1.0208)">Windows</div><div class="a t" style="left:365px;top:30.84px;font-size:12px;line-height:12px;color:#c8c8c8;;transform-origin:0 0;transform:scaleX(0.9764)">Skeleton</div><div class="a t" style="left:425px;top:30.84px;font-size:12px;line-height:12px;color:#c8c8c8;;transform-origin:0 0;transform:scaleX(0.9681)">Skin</div><div class="a t" style="left:462px;top:30.84px;font-size:12px;line-height:12px;color:#c8c8c8;;transform-origin:0 0;transform:scaleX(0.9658)">Deform</div><div class="a t" style="left:515px;top:30.84px;font-size:12px;line-height:12px;color:#c8c8c8;;transform-origin:0 0;transform:scaleX(0.9930)">Constrain</div><div class="a t" style="left:580px;top:30.84px;font-size:12px;line-height:12px;color:#c8c8c8;;transform-origin:0 0;transform:scaleX(1.0236)">Control</div><div class="a t" style="left:634px;top:30.84px;font-size:12px;line-height:12px;color:#c8c8c8;;transform-origin:0 0;transform:scaleX(0.8995)">Cache</div><div class="a t" style="left:680px;top:30.84px;font-size:12px;line-height:12px;color:#c8c8c8;;transform-origin:0 0;transform:scaleX(1.0205)">Arnold</div><div class="a t" style="left:730px;top:30.84px;font-size:12px;line-height:12px;color:#c8c8c8;;transform-origin:0 0;transform:scaleX(0.9722)">Help</div><div class="a t" style="left:1636px;top:30.84px;font-size:12px;line-height:12px;color:#bdbdbd;;transform-origin:0 0;transform:scaleX(0.9503)">Workspace:</div><div class="a" style="left:1700px;top:26px;width:192px;height:19px;background:#5a5a5a;border-radius:2px"></div><div class="a" style="left:1872px;top:26px;width:1px;height:19px;background:#4e4e4e;"></div><div class="a t" style="left:1703px;top:30.84px;font-size:12px;line-height:12px;color:#cfcfcf;;transform-origin:0 0;transform:scaleX(0.9499)">General*</div><svg class="a" style="left:1877px;top:33px;" width="10" height="6" viewBox="0 0 10 6"><polygon points="0,0 10,0 5.0,6" fill="#c8c8c8"/></svg><svg class="a" style="left:1901px;top:28px;" width="12" height="17" viewBox="0 0 12 17"><path d="M3 7 V4.5 A3 3 0 0 1 9 4.5 V7" fill="none" stroke="#c8c8c8" stroke-width="2"/><rect x="1" y="7" width="10" height="9" rx="1" fill="#c8c8c8"/><rect x="5.5" y="10" width="1.5" height="3" fill="#444"/></svg><svg class="a" style="left:3px;top:53px;" width="6" height="21" viewBox="0 0 6 21"><rect x="0" y="0" width="1" height="1" fill="#777"/><rect x="3" y="0" width="1" height="1" fill="#777"/><rect x="0" y="3" width="1" height="1" fill="#777"/><rect x="3" y="3" width="1" height="1" fill="#777"/><rect x="0" y="6" width="1" height="1" fill="#777"/><rect x="3" y="6" width="1" height="1" fill="#777"/><rect x="0" y="9" width="1" height="1" fill="#777"/><rect x="3" y="9" width="1" height="1" fill="#777"/><rect x="0" y="12" width="1" height="1" fill="#777"/><rect x="3" y="12" width="1" height="1" fill="#777"/><rect x="0" y="15" width="1" height="1" fill="#777"/><rect x="3" y="15" width="1" height="1" fill="#777"/><rect x="0" y="18" width="1" height="1" fill="#777"/><rect x="3" y="18" width="1" height="1" fill="#777"/></svg><div class="a" style="left:14px;top:53px;width:98px;height:20px;background:#5a5a5a;border-radius:2px"></div><div class="a" style="left:91px;top:53px;width:1px;height:20px;background:#4e4e4e;"></div><div class="a t" style="left:17px;top:57.84px;font-size:12px;line-height:12px;color:#cfcfcf;;transform-origin:0 0;transform:scaleX(1.0073)">Rigging</div><svg class="a" style="left:97px;top:60px;" width="10" height="6" viewBox="0 0 10 6"><polygon points="0,0 10,0 5.0,6" fill="#c8c8c8"/></svg><svg class="a" style="left:121px;top:53px;" width="4" height="21" viewBox="0 0 4 21"><rect x="1.5" y="0" width="1" height="21" fill="#7a7a7a"/><rect x="0.5" y="5.9" width="3" height="9.2" rx="1" fill="#7a7a7a"/></svg><svg class="a" style="left:140px;top:55px;" width="12" height="16" viewBox="0 0 12 16"><path d="M0 0 H7 L12 5 V16 H0 Z" fill="#cbcbcb"/><path d="M7 0 V5 H12" fill="#9a9a9a"/></svg><svg class="a" style="left:161px;top:56px;" width="18" height="15" viewBox="0 0 18 15"><path d="M0 2 H6 L8 4 H16 V6 H4 L1 14 H0 Z" fill="#c8c8c8"/><path d="M4 7 H18 L15 15 H1 Z" fill="#c8c8c8"/></svg><svg class="a" style="left:185px;top:55px;" width="15" height="16" viewBox="0 0 15 16"><path d="M0 1 Q0 0 1 0 H12 L15 3 V15 Q15 16 14 16 H1 Q0 16 0 15 Z" fill="#c8c8c8"/><rect x="3" y="2" width="8" height="4" fill="#444"/><rect x="5" y="10" width="5" height="4" fill="#444"/></svg><svg class="a" style="left:206px;top:57px;" width="17" height="12" viewBox="0 0 17 12"><path d="M6 1 L1 5 L6 9 M1 5 H12 A4 4 0 0 1 12 13 H8" fill="none" stroke="#c8c8c8" stroke-width="2.4"/></svg><svg class="a" style="left:229px;top:57px;" width="18" height="12" viewBox="0 0 18 12"><path d="M12 1 L17 5 L12 9 M17 5 H6 A4 4 0 0 0 6 13 H8" fill="none" stroke="#c8c8c8" stroke-width="2.4"/></svg><svg class="a" style="left:260px;top:55px;" width="6" height="18" viewBox="0 0 6 18"><rect x="0" y="0" width="1" height="18" fill="#6b6b6b"/><polygon points="1,5.4 5,9.0 1,12.6" fill="#6b6b6b"/></svg><svg class="a" style="left:280px;top:53px;" width="4" height="21" viewBox="0 0 4 21"><rect x="1.5" y="0" width="1" height="21" fill="#7a7a7a"/><rect x="0.5" y="5.9" width="3" height="9.2" rx="1" fill="#7a7a7a"/></svg><svg class="a" style="left:297px;top:54px;" width="18" height="19" viewBox="0 0 18 19"><rect x="0" y="1" width="5" height="5" fill="#c8c8c8"/><rect x="0" y="10" width="5" height="5" fill="#c8c8c8"/><path d="M6 3 H9 V7" stroke="#3fb5c5" fill="none" stroke-width="1.5"/><path d="M9 6 L9 18 L12 15 L15 19 L17 18 L14 14 L18 14 Z" fill="#c8c8c8"/></svg><div class="a" style="left:317px;top:52px;width:22px;height:22px;background:#5285a6;"></div><svg class="a" style="left:318px;top:54px;" width="20" height="19" viewBox="0 0 20 19"><rect x="8" y="1" width="8" height="8" fill="none" stroke="#333" stroke-width="1.5"/><rect x="8.5" y="1.5" width="7" height="7" fill="#3fb5c5"/><circle cx="6" cy="12" r="5" fill="#c8c8c8"/><path d="M11 6 L11 18 L14 15 L17 19 L19 18 L16 14 L20 14 Z" fill="#c8c8c8" stroke="#333" stroke-width="0.5"/></svg><svg class="a" style="left:343px;top:54px;" width="18" height="19" viewBox="0 0 18 19"><rect x="0" y="1" width="5" height="5" fill="#c8c8c8"/><rect x="6" y="1" width="5" height="5" fill="#c8c8c8"/><rect x="0" y="7" width="5" height="5" fill="#c8c8c8"/><rect x="6" y="7" width="3" height="5" fill="#3fb5c5"/><path d="M9 7 L9 18 L12 15 L15 19 L17 18 L14 14 L18 14 Z" fill="#c8c8c8"/></svg><svg class="a" style="left:372px;top:53px;" width="4" height="21" viewBox="0 0 4 21"><rect x="1.5" y="0" width="1" height="21" fill="#7a7a7a"/><rect x="0.5" y="5.9" width="3" height="9.2" rx="1" fill="#7a7a7a"/></svg><svg class="a" style="left:386px;top:61px;" width="9" height="6" viewBox="0 0 9 6"><polygon points="0,0 9,0 4.5,6" fill="#8c8c8c"/></svg><div class="a" style="left:398px;top:52px;width:22px;height:22px;background:#5285a6;"></div><div class="a" style="left:421px;top:52px;width:22px;height:22px;background:#5285a6;"></div><div class="a" style="left:444px;top:52px;width:22px;height:22px;background:#5285a6;"></div><div class="a" style="left:490px;top:52px;width:22px;height:22px;background:#5285a6;"></div><div class="a" style="left:513px;top:52px;width:22px;height:22px;background:#5285a6;"></div><div class="a" style="left:536px;top:52px;width:22px;height:22px;background:#5285a6;"></div><div class="a" style="left:559px;top:52px;width:22px;height:22px;background:#5285a6;"></div><svg class="a" style="left:401px;top:55px;" width="16" height="16" viewBox="0 0 16 16"><path d="M8 1 V15 M1 8 H15" stroke="#222" stroke-width="3"/><path d="M8 1 V15 M1 8 H15" stroke="#3fb5c5" stroke-width="1.5"/></svg><svg class="a" style="left:424px;top:55px;" width="16" height="16" viewBox="0 0 16 16"><path d="M12 2 L3 10 L10 15" fill="none" stroke="#222" stroke-width="3"/><path d="M12 2 L3 10 L10 15" fill="none" stroke="#3fb5c5" stroke-width="1.3"/><circle cx="12" cy="2.5" r="2" fill="#3fb5c5" stroke="#222"/><circle cx="3" cy="10" r="2" fill="#3fb5c5" stroke="#222"/></svg><svg class="a" style="left:447px;top:55px;" width="16" height="16" viewBox="0 0 16 16"><path d="M2 2 Q8 2 7 8 Q6 14 14 14" fill="none" stroke="#222" stroke-width="3"/><path d="M2 2 Q8 2 7 8 Q6 14 14 14" fill="none" stroke="#3fb5c5" stroke-width="1.3"/><rect x="0" y="0" width="4" height="4" fill="#3fb5c5" stroke="#222"/><rect x="12" y="12" width="4" height="4" fill="#3fb5c5" stroke="#222"/></svg><svg class="a" style="left:472px;top:57px;" width="12" height="12" viewBox="0 0 12 12"><path d="M6 0 L12 6 L6 12 L0 6 Z" fill="#3fb5c5"/><path d="M3 3 L9 9 M9 3 L3 9" stroke="#444" stroke-width="1.2"/></svg><svg class="a" style="left:493px;top:55px;" width="16" height="16" viewBox="0 0 16 16"><rect x="2" y="2" width="12" height="12" fill="#3fb5c5" stroke="#222" stroke-width="1.5"/><rect x="0" y="0" width="4" height="4" fill="#3fb5c5" stroke="#222"/><rect x="12" y="0" width="4" height="4" fill="#3fb5c5" stroke="#222"/><rect x="0" y="12" width="4" height="4" fill="#3fb5c5" stroke="#222"/><rect x="12" y="12" width="4" height="4" fill="#3fb5c5" stroke="#222"/></svg><svg class="a" style="left:516px;top:55px;" width="16" height="16" viewBox="0 0 16 16"><g fill="#3fb5c5" stroke="#222" stroke-width="0.8"><circle cx="3" cy="3" r="2"/><circle cx="8" cy="4" r="2.5"/><circle cx="12" cy="7" r="2"/><circle cx="4" cy="9" r="2.5"/><circle cx="9" cy="11" r="2.5"/><circle cx="13" cy="14" r="2"/><circle cx="4" cy="14" r="1.5"/></g></svg><svg class="a" style="left:538px;top:54px;" width="18" height="18" viewBox="0 0 18 18"><rect x="1" y="3" width="16" height="13" fill="#3fb5c5" stroke="#222" stroke-width="1.2"/><rect x="1" y="1" width="16" height="3" fill="#222"/><circle cx="6" cy="13" r="5" fill="#3fb5c5" stroke="#222" stroke-width="1.2"/></svg><svg class="a" style="left:563px;top:55px;" width="14" height="17" viewBox="0 0 14 17"><path d="M3 5 A4.5 4.5 0 1 1 8 9.5 V12" fill="none" stroke="#222" stroke-width="3.2"/><path d="M3 5 A4.5 4.5 0 1 1 8 9.5 V12" fill="none" stroke="#3fb5c5" stroke-width="1.8"/><circle cx="8" cy="15" r="1.6" fill="#3fb5c5" stroke="#222" stroke-width="0.6"/></svg><svg class="a" style="left:588px;top:55px;" width="12" height="17" viewBox="0 0 12 17"><path d="M3 8 V5 A3 3 0 0 1 9 5 V8" fill="none" stroke="#c8c8c8" stroke-width="2"/><rect x="0.5" y="8" width="11" height="9" rx="1" fill="#c8c8c8"/><rect x="5.2" y="11" width="1.6" height="3" fill="#444"/></svg><svg class="a" style="left:608px;top:55px;" width="17" height="18" viewBox="0 0 17 18"><path d="M1 4 V14 H5" fill="none" stroke="#c8c8c8" stroke-width="1.3" stroke-dasharray="2 1.5"/><rect x="4" y="1" width="9" height="9" fill="#c8c8c8"/><path d="M7 4 L7 16 L10 13 L13 17 L15 16 L12 12 L16 12 Z" fill="#c8c8c8" stroke="#444" stroke-width="0.7"/></svg><svg class="a" style="left:636px;top:53px;" width="4" height="21" viewBox="0 0 4 21"><rect x="1.5" y="0" width="1" height="21" fill="#7a7a7a"/><rect x="0.5" y="5.9" width="3" height="9.2" rx="1" fill="#7a7a7a"/></svg><svg class="a" style="left:653px;top:54px;" width="18" height="18" viewBox="0 0 18 18"><path d="M4 12 L2 9 A5.5 5.5 0 0 1 11 3 L13 6" fill="none" stroke="#c8c8c8" stroke-width="2.6"/><path d="M9 10 V17 M13 10 V17 M7 12 H16 M7 15 H16" stroke="#3fb5c5" stroke-width="1.2"/></svg><svg class="a" style="left:676px;top:54px;" width="18" height="18" viewBox="0 0 18 18"><path d="M4 12 L2 9 A5.5 5.5 0 0 1 11 3 L13 6" fill="none" stroke="#c8c8c8" stroke-width="2.6"/><path d="M8 11 Q13 13 16 7" fill="none" stroke="#3fb5c5" stroke-width="1.6"/><rect x="7" y="14" width="1.5" height="3" fill="#3fb5c5"/></svg><svg class="a" style="left:698px;top:54px;" width="18" height="18" viewBox="0 0 18 18"><path d="M4 12 L2 9 A5.5 5.5 0 0 1 11 3 L13 6" fill="none" stroke="#c8c8c8" stroke-width="2.6"/><circle cx="13" cy="15" r="2" fill="#3fb5c5"/></svg><svg class="a" style="left:722px;top:54px;" width="18" height="18" viewBox="0 0 18 18"><path d="M4 12 L2 9 A5.5 5.5 0 0 1 11 3 L13 6" fill="none" stroke="#c8c8c8" stroke-width="2.6"/><circle cx="11" cy="13" r="2" fill="none" stroke="#3fb5c5"/><circle cx="15" cy="2" r="1.5" fill="none" stroke="#3fb5c5"/></svg><svg class="a" style="left:745px;top:54px;" width="18" height="18" viewBox="0 0 18 18"><path d="M4 12 L2 9 A5.5 5.5 0 0 1 11 3 L13 6" fill="none" stroke="#c8c8c8" stroke-width="2.6"/><path d="M8 9 L14 15 M10 13 L15 8 M12 11 L17 16" stroke="#3fb5c5" stroke-width="1.2"/></svg><svg class="a" style="left:769px;top:54px;" width="18" height="18" viewBox="0 0 18 18"><path d="M4 12 L2 9 A5.5 5.5 0 0 1 11 3 L13 6" fill="none" stroke="#c8c8c8" stroke-width="2.6"/></svg><svg class="a" style="left:792px;top:61px;" width="9" height="6" viewBox="0 0 9 6"><polygon points="0,0 9,0 4.5,6" fill="#8c8c8c"/></svg><div class="a" style="left:807px;top:53px;width:98px;height:20px;background:#3e3e3e;border:1px solid #383838;border-radius:3px"></div><div class="a t" style="left:812px;top:57.84px;font-size:12px;line-height:12px;color:#cfcfcf;;transform-origin:0 0;transform:scaleX(0.9252)">No Live Surface</div><svg class="a" style="left:916px;top:53px;" width="4" height="21" viewBox="0 0 4 21"><rect x="1.5" y="0" width="1" height="21" fill="#7a7a7a"/><rect x="0.5" y="5.9" width="3" height="9.2" rx="1" fill="#7a7a7a"/></svg><svg class="a" style="left:934px;top:61px;" width="9" height="6" viewBox="0 0 9 6"><polygon points="0,0 9,0 4.5,6" fill="#8c8c8c"/></svg><div class="a" style="left:948px;top:53px;width:100px;height:20px;background:#3e3e3e;border:1px solid #383838;border-radius:3px"></div><div class="a t" style="left:954px;top:57.84px;font-size:12px;line-height:12px;color:#cfcfcf;;transform-origin:0 0;transform:scaleX(0.9418)">Symmetry: Off</div><svg class="a" style="left:1059px;top:55px;" width="6" height="18" viewBox="0 0 6 18"><rect x="0" y="0" width="1" height="18" fill="#6b6b6b"/><polygon points="1,5.4 5,9.0 1,12.6" fill="#6b6b6b"/></svg><svg class="a" style="left:1080px;top:53px;" width="4" height="21" viewBox="0 0 4 21"><rect x="1.5" y="0" width="1" height="21" fill="#7a7a7a"/><rect x="0.5" y="5.9" width="3" height="9.2" rx="1" fill="#7a7a7a"/></svg><svg class="a" style="left:1096px;top:55px;" width="18" height="17" viewBox="0 0 18 17"><rect x="0.5" y="4" width="17" height="12" fill="#c8c8c8"/><rect x="0.5" y="0.5" width="17" height="2.5" fill="#c8c8c8"/><path d="M3 0.5 L5 3 M8 0.5 L10 3 M13 0.5 L15 3" stroke="#444" stroke-width="1.2"/><ellipse cx="9" cy="10" rx="6" ry="3" fill="none" stroke="#444" stroke-width="1.3"/><circle cx="9" cy="10" r="1.6" fill="#444"/></svg><svg class="a" style="left:1119px;top:55px;" width="18" height="17" viewBox="0 0 18 17"><rect x="0.5" y="4" width="17" height="12" fill="#c8c8c8"/><rect x="0.5" y="0.5" width="17" height="2.5" fill="#c8c8c8"/><path d="M3 0.5 L5 3 M8 0.5 L10 3 M13 0.5 L15 3" stroke="#444" stroke-width="1.2"/></svg><svg class="a" style="left:1142px;top:55px;" width="18" height="17" viewBox="0 0 18 17"><rect x="0.5" y="4" width="17" height="12" fill="#c8c8c8"/><rect x="0.5" y="0.5" width="17" height="2.5" fill="#c8c8c8"/><path d="M3 0.5 L5 3 M8 0.5 L10 3 M13 0.5 L15 3" stroke="#444" stroke-width="1.2"/><text x="9" y="15" font-size="8" font-family="Liberation Sans" font-weight="bold" text-anchor="middle" fill="#444">IPR</text></svg><svg class="a" style="left:1165px;top:55px;" width="18" height="17" viewBox="0 0 18 17"><rect x="0.5" y="4" width="17" height="12" fill="#c8c8c8"/><rect x="0.5" y="0.5" width="17" height="2.5" fill="#c8c8c8"/><path d="M3 0.5 L5 3 M8 0.5 L10 3 M13 0.5 L15 3" stroke="#444" stroke-width="1.2"/><circle cx="14" cy="14" r="3.5" fill="#3fb5c5" stroke="#444"/></svg><svg class="a" style="left:1188px;top:55px;" width="17" height="17" viewBox="0 0 17 17"><circle cx="8.5" cy="8.5" r="8" fill="#3fb5c5"/><circle cx="8.5" cy="7.5" r="3.5" fill="#d8d8d8"/></svg><svg class="a" style="left:1211px;top:55px;" width="18" height="17" viewBox="0 0 18 17"><rect x="0.5" y="4" width="17" height="12" fill="#c8c8c8"/><rect x="0.5" y="0.5" width="17" height="2.5" fill="#c8c8c8"/><path d="M3 0.5 L5 3 M8 0.5 L10 3 M13 0.5 L15 3" stroke="#444" stroke-width="1.2"/><path d="M10 11 L14 9 L18 11 L14 13 Z M10 14 L14 12 L18 14 L14 16 Z" fill="#3fb5c5" stroke="#444" stroke-width="0.6"/></svg><svg class="a" style="left:1235px;top:55px;" width="18" height="17" viewBox="0 0 18 17"><path d="M7 9 L15 1" stroke="#c8c8c8" stroke-width="3"/><path d="M3 8 L8 13" stroke="#3fb5c5" stroke-width="2" stroke-dasharray="2 1.5"/><circle cx="13" cy="12" r="3.8" fill="#3fb5c5"/><circle cx="13" cy="12" r="1.5" fill="#444"/></svg><svg class="a" style="left:1261px;top:56px;" width="9" height="14" viewBox="0 0 9 14"><rect x="0" y="0" width="3" height="14" fill="#c8c8c8"/><rect x="6" y="0" width="3" height="14" fill="#c8c8c8"/></svg><svg class="a" style="left:1287px;top:55px;" width="6" height="18" viewBox="0 0 6 18"><rect x="0" y="0" width="1" height="18" fill="#6b6b6b"/><polygon points="1,5.4 5,9.0 1,12.6" fill="#6b6b6b"/></svg><svg class="a" style="left:1308px;top:53px;" width="4" height="21" viewBox="0 0 4 21"><rect x="1.5" y="0" width="1" height="21" fill="#7a7a7a"/><rect x="0.5" y="5.9" width="3" height="9.2" rx="1" fill="#7a7a7a"/></svg><div class="a" style="left:1322px;top:52px;width:120px;height:22px;background:#5a5a5a;border-radius:2px"></div><svg class="a" style="left:1326px;top:55px;" width="14" height="16" viewBox="0 0 14 16"><circle cx="7" cy="5" r="3.5" fill="none" stroke="#d0d0d0" stroke-width="1.3"/><path d="M1 15 Q1 9 7 9 Q13 9 13 15" fill="none" stroke="#d0d0d0" stroke-width="1.3"/></svg><div class="a t" style="left:1345px;top:57.84px;font-size:12px;line-height:12px;color:#e0e0e0;;transform-origin:0 0;transform:scaleX(0.9619)">Saidul Hossain</div><svg class="a" style="left:1429px;top:60px;" width="10" height="6" viewBox="0 0 10 6"><polygon points="0,0 10,0 5.0,6" fill="#e0e0e0"/></svg><svg class="a" style="left:1804px;top:55px;" width="18" height="17" viewBox="0 0 18 17"><path d="M2 5 L8 2 L17 2 L17 5 L14 5 L14 16 L2 16 Z" fill="#c8c8c8"/><path d="M6 6 V16 M10 6 V16 M2 9 H14 M2 12 H14" stroke="#444" stroke-width="1"/></svg><svg class="a" style="left:1828px;top:55px;" width="17" height="17" viewBox="0 0 17 17"><circle cx="8.5" cy="2.5" r="2" fill="#c8c8c8"/><path d="M1 6 H16 M8.5 5 V11 M6 11 H11 V16 M6 11 V16" stroke="#c8c8c8" stroke-width="2" fill="none"/></svg><svg class="a" style="left:1851px;top:55px;" width="18" height="17" viewBox="0 0 18 17"><path d="M0 2 H5 M9 2 H18 M0 8 H3 M6 8 H11 M14 8 H18 M0 14 H5 M9 14 H18" stroke="#c8c8c8" stroke-width="2"/><rect x="8" y="6" width="6" height="4" fill="none" stroke="#c8c8c8"/></svg><svg class="a" style="left:1874px;top:55px;" width="18" height="17" viewBox="0 0 18 17"><path d="M0 2 H3 M6 2 H18 M0 8 H3 M6 8 H12 M0 14 H3 M6 14 H12" stroke="#c8c8c8" stroke-width="2"/><path d="M14 2 V16" stroke="#c8c8c8" stroke-width="2"/></svg><svg class="a" style="left:1897px;top:55px;" width="17" height="17" viewBox="0 0 17 17"><path d="M8.5 1 L16 5 L8.5 9 L1 5 Z" fill="#c8c8c8"/><path d="M1 8 L8.5 12 L16 8 M1 11 L8.5 15 L16 11" fill="none" stroke="#c8c8c8" stroke-width="1.6"/><path d="M4 4 H13 M4 6 H13" stroke="#444" stroke-width="0.7"/></svg><svg class="a" style="left:3px;top:81px;" width="6" height="64" viewBox="0 0 6 64"><rect x="0" y="0" width="1" height="1" fill="#777"/><rect x="3" y="0" width="1" height="1" fill="#777"/><rect x="0" y="3" width="1" height="1" fill="#777"/><rect x="3" y="3" width="1" height="1" fill="#777"/><rect x="0" y="6" width="1" height="1" fill="#777"/><rect x="3" y="6" width="1" height="1" fill="#777"/><rect x="0" y="9" width="1" height="1" fill="#777"/><rect x="3" y="9" width="1" height="1" fill="#777"/><rect x="0" y="12" width="1" height="1" fill="#777"/><rect x="3" y="12" width="1" height="1" fill="#777"/><rect x="0" y="15" width="1" height="1" fill="#777"/><rect x="3" y="15" width="1" height="1" fill="#777"/><rect x="0" y="18" width="1" height="1" fill="#777"/><rect x="3" y="18" width="1" height="1" fill="#777"/><rect x="0" y="21" width="1" height="1" fill="#777"/><rect x="3" y="21" width="1" height="1" fill="#777"/><rect x="0" y="24" width="1" height="1" fill="#777"/><rect x="3" y="24" width="1" height="1" fill="#777"/><rect x="0" y="27" width="1" height="1" fill="#777"/><rect x="3" y="27" width="1" height="1" fill="#777"/><rect x="0" y="30" width="1" height="1" fill="#777"/><rect x="3" y="30" width="1" height="1" fill="#777"/><rect x="0" y="33" width="1" height="1" fill="#777"/><rect x="3" y="33" width="1" height="1" fill="#777"/><rect x="0" y="36" width="1" height="1" fill="#777"/><rect x="3" y="36" width="1" height="1" fill="#777"/><rect x="0" y="39" width="1" height="1" fill="#777"/><rect x="3" y="39" width="1" height="1" fill="#777"/><rect x="0" y="42" width="1" height="1" fill="#777"/><rect x="3" y="42" width="1" height="1" fill="#777"/><rect x="0" y="45" width="1" height="1" fill="#777"/><rect x="3" y="45" width="1" height="1" fill="#777"/><rect x="0" y="48" width="1" height="1" fill="#777"/><rect x="3" y="48" width="1" height="1" fill="#777"/><rect x="0" y="51" width="1" height="1" fill="#777"/><rect x="3" y="51" width="1" height="1" fill="#777"/><rect x="0" y="54" width="1" height="1" fill="#777"/><rect x="3" y="54" width="1" height="1" fill="#777"/><rect x="0" y="57" width="1" height="1" fill="#777"/><rect x="3" y="57" width="1" height="1" fill="#777"/><rect x="0" y="60" width="1" height="1" fill="#777"/><rect x="3" y="60" width="1" height="1" fill="#777"/><rect x="0" y="63" width="1" height="1" fill="#777"/><rect x="3" y="63" width="1" height="1" fill="#777"/></svg><div class="a" style="left:19px;top:94px;width:10px;height:2px;background:#c0c0c0;"></div><div class="a" style="left:19px;top:97px;width:10px;height:2px;background:#c0c0c0;"></div><svg class="a" style="left:19px;top:123px;" width="11" height="11" viewBox="0 0 11 11"><circle cx="5.5" cy="5.5" r="3.6" fill="none" stroke="#c0c0c0" stroke-width="2"/><g stroke="#c0c0c0" stroke-width="2"><path d="M5.5 0 V2 M5.5 9 V11 M0 5.5 H2 M9 5.5 H11 M1.6 1.6 L3 3 M8 8 L9.4 9.4 M1.6 9.4 L3 8 M8 3 L9.4 1.6"/></g></svg><div class="a" style="left:39px;top:84px;width:108px;height:17px;background:#373737;border:1px solid #323232;border-bottom:none;border-radius:2px 2px 0 0"></div><div class="a t" style="left:49px;top:86.84px;font-size:12px;line-height:12px;color:#a8a8a8;;transform-origin:0 0;transform:scaleX(0.9122)">Curves / Surfaces</div><div class="a" style="left:149px;top:83px;width:96px;height:18px;background:#444;border-radius:2px 2px 0 0"></div><div class="a t" style="left:160px;top:86.84px;font-size:12px;line-height:12px;color:#eaeaea;;transform-origin:0 0;transform:scaleX(0.9950)">Poly Modeling</div><div class="a" style="left:248px;top:84px;width:69px;height:17px;background:#373737;border:1px solid #323232;border-bottom:none;border-radius:2px 2px 0 0"></div><div class="a t" style="left:258px;top:86.84px;font-size:12px;line-height:12px;color:#a8a8a8;;transform-origin:0 0;transform:scaleX(1.0066)">Sculpting</div><div class="a" style="left:320px;top:84px;width:63px;height:17px;background:#373737;border:1px solid #323232;border-bottom:none;border-radius:2px 2px 0 0"></div><div class="a t" style="left:331px;top:86.84px;font-size:12px;line-height:12px;color:#a8a8a8;;transform-origin:0 0;transform:scaleX(1.0171)">Rigging</div><div class="a" style="left:385px;top:84px;width:75px;height:17px;background:#373737;border:1px solid #323232;border-bottom:none;border-radius:2px 2px 0 0"></div><div class="a t" style="left:396px;top:86.84px;font-size:12px;line-height:12px;color:#a8a8a8;;transform-origin:0 0;transform:scaleX(0.9930)">Animation</div><div class="a" style="left:462px;top:84px;width:76px;height:17px;background:#373737;border:1px solid #323232;border-bottom:none;border-radius:2px 2px 0 0"></div><div class="a t" style="left:473px;top:86.84px;font-size:12px;line-height:12px;color:#a8a8a8;;transform-origin:0 0;transform:scaleX(0.9824)">Rendering</div><div class="a" style="left:540px;top:84px;width:34px;height:17px;background:#373737;border:1px solid #323232;border-bottom:none;border-radius:2px 2px 0 0"></div><div class="a t" style="left:551px;top:86.84px;font-size:12px;line-height:12px;color:#a8a8a8;;transform-origin:0 0;transform:scaleX(0.8277)">FX</div><div class="a" style="left:577px;top:84px;width:78px;height:17px;background:#373737;border:1px solid #323232;border-bottom:none;border-radius:2px 2px 0 0"></div><div class="a t" style="left:587px;top:86.84px;font-size:12px;line-height:12px;color:#a8a8a8;;transform-origin:0 0;transform:scaleX(0.9170)">FX Caching</div><div class="a" style="left:657px;top:84px;width:61px;height:17px;background:#373737;border:1px solid #323232;border-bottom:none;border-radius:2px 2px 0 0"></div><div class="a t" style="left:668px;top:86.84px;font-size:12px;line-height:12px;color:#a8a8a8;;transform-origin:0 0;transform:scaleX(0.9481)">Custom</div><div class="a" style="left:720px;top:84px;width:57px;height:17px;background:#373737;border:1px solid #323232;border-bottom:none;border-radius:2px 2px 0 0"></div><div class="a t" style="left:731px;top:86.84px;font-size:12px;line-height:12px;color:#a8a8a8;;transform-origin:0 0;transform:scaleX(1.0321)">Arnold</div><div class="a" style="left:779px;top:84px;width:53px;height:17px;background:#373737;border:1px solid #323232;border-bottom:none;border-radius:2px 2px 0 0"></div><div class="a t" style="left:790px;top:86.84px;font-size:12px;line-height:12px;color:#a8a8a8;;transform-origin:0 0;transform:scaleX(0.9143)">MASH</div><div class="a" style="left:835px;top:84px;width:107px;height:17px;background:#373737;border:1px solid #323232;border-bottom:none;border-radius:2px 2px 0 0"></div><div class="a t" style="left:845px;top:86.84px;font-size:12px;line-height:12px;color:#a8a8a8;;transform-origin:0 0;transform:scaleX(0.9911)">Motion Graphics</div><div class="a" style="left:945px;top:84px;width:47px;height:17px;background:#373737;border:1px solid #323232;border-bottom:none;border-radius:2px 2px 0 0"></div><div class="a t" style="left:954px;top:86.84px;font-size:12px;line-height:12px;color:#a8a8a8;;transform-origin:0 0;transform:scaleX(0.9222)">XGen</div><svg class="a" style="left:47px;top:108px;" width="24" height="25" viewBox="0 0 24 25"><circle cx="12" cy="12.5" r="11.5" fill="#e8944a"/><g fill="none" stroke="#444" stroke-width="1.2"><path d="M2.5 8 Q12 11.5 21.5 8"/><path d="M1 14 Q12 17.5 23 14"/><path d="M3 20 Q12 23 21 20"/><path d="M12 1 Q5 9 6 24"/><path d="M12 1 Q19 9 18 24"/></g></svg><svg class="a" style="left:82px;top:107px;" width="24" height="26" viewBox="0 0 24 26"><path d="M12 1 L23 6 L23 20 L12 25 L1 20 L1 6 Z" fill="#e8944a"/><g fill="none" stroke="#444" stroke-width="1.3"><path d="M1 6 L12 11 L23 6 M12 11 V25 M6.5 3.5 L17.5 8.5 M17.5 3.5 L6.5 8.5 M6.5 8.5 V22.5 M1 13 L12 18 L23 13 M17.5 8.5 V22.5"/></g></svg><svg class="a" style="left:118px;top:108px;" width="23" height="25" viewBox="0 0 23 25"><path d="M1 5 A10.5 4.5 0 0 1 22 5 V20 A10.5 4.5 0 0 1 1 20 Z" fill="#e8944a"/><g fill="none" stroke="#444" stroke-width="1.2"><path d="M1 5 A10.5 4.5 0 0 0 22 5 M1 12 A10.5 4.5 0 0 0 22 12 M11.5 9.5 V24.5 M6 9 V23 M17 9 V23 M11.5 0.5 V9.5 M3 2 L20 8"/></g></svg><svg class="a" style="left:153px;top:108px;" width="21" height="25" viewBox="0 0 21 25"><path d="M10.5 0 L20.5 19 A10 5 0 0 1 0.5 19 Z" fill="#e8944a"/><path d="M10.5 0 V24" stroke="#444" stroke-width="1.2"/><path d="M0.5 19 A10 4 0 0 0 20.5 19" fill="none" stroke="#444" stroke-width="1"/></svg><svg class="a" style="left:189px;top:108px;" width="21" height="25" viewBox="0 0 21 25"><ellipse cx="10.5" cy="12.5" rx="9.5" ry="12" fill="#e8944a"/><ellipse cx="10.5" cy="12.5" rx="3" ry="7" fill="#444" transform="rotate(25 10.5 12.5)"/><g stroke="#444" stroke-width="1.2"><path d="M2 6 L6 9 M16 3 L13 8 M19 15 L14 14 M7 23 L8 18"/></g></svg><svg class="a" style="left:222px;top:108px;" width="25" height="25" viewBox="0 0 25 25"><path d="M12.5 0 L25 12.5 L12.5 25 L0 12.5 Z" fill="#e8944a"/><path d="M6.25 6.25 L18.75 18.75 M18.75 6.25 L6.25 18.75" stroke="#444" stroke-width="1.5"/></svg><svg class="a" style="left:257px;top:113px;" width="23" height="15" viewBox="0 0 23 15"><ellipse cx="11.5" cy="7.5" rx="11" ry="7.5" fill="#e8944a"/><path d="M0.5 7.5 H22.5 M5 2 L18 13 M18 2 L5 13" stroke="#444" stroke-width="1.3"/></svg><div class="a" style="left:303px;top:104px;width:2px;height:35px;background:#9a9a9a;"></div><svg class="a" style="left:326px;top:107px;" width="27" height="27" viewBox="0 0 27 27"><path d="M13 1 L24 7 L25 19 L13 26 L2 19 L2 7 Z" fill="#e8944a"/><g fill="none" stroke="#444" stroke-width="1.2"><path d="M13 1 L7 11 L19 11 Z M7 11 L2 19 M19 11 L25 19 M7 11 L13 26 L19 11 M2 7 L7 11 M24 7 L19 11"/></g><polygon points="27,22 27,27 22,27" fill="#ccc"/></svg><div class="a" style="left:372px;top:104px;width:2px;height:35px;background:#9a9a9a;"></div><svg class="a" style="left:394px;top:107px;" width="28" height="27" viewBox="0 0 28 27"><path d="M13 0 Q15 10 26 13 Q15 16 13 26 Q11 16 0 13 Q11 10 13 0 Z" fill="#e8944a"/><polygon points="28,22 28,27 23,27" fill="#ccc"/></svg><svg class="a" style="left:429px;top:107px;" width="26" height="27" viewBox="0 0 26 27"><g fill="none" stroke="#e8944a" stroke-width="3.2"><path d="M3 6 Q13 1 23 6 Q13 10 3 12 Q13 14 23 17 Q13 20 3 21 Q13 24 22 25"/></g><path d="M5 2 L9 1 M17 22 L21 26" stroke="#ccc" stroke-width="1"/></svg><svg class="a" style="left:466px;top:108px;" width="22" height="25" viewBox="0 0 22 25"><text x="11" y="23" font-size="28" font-family="Liberation Serif" font-weight="bold" text-anchor="middle" fill="#e8944a">T</text></svg><svg class="a" style="left:500px;top:109px;" width="24" height="23" viewBox="0 0 24 23"><rect x="0" y="0" width="24" height="23" fill="#e8944a"/><text x="12" y="15" font-size="12" font-family="Liberation Sans" font-weight="bold" text-anchor="middle" fill="#444">svg</text></svg><div class="a" style="left:546px;top:104px;width:2px;height:35px;background:#9a9a9a;"></div><svg class="a" style="left:569px;top:109px;" width="25" height="24" viewBox="0 0 25 24"><rect x="0" y="0" width="25" height="24" fill="#3fb5c5"/><rect x="2" y="5" width="21" height="17" fill="#444"/><g fill="#3fb5c5"><rect x="4" y="8" width="4.5" height="4"/><rect x="10.25" y="8" width="4.5" height="4"/><rect x="16.5" y="8" width="4.5" height="4"/><rect x="4" y="15" width="4.5" height="4"/><rect x="10.25" y="15" width="4.5" height="4"/><rect x="16.5" y="15" width="4.5" height="4"/></g><path d="M2 2 H4 M6 2 H8 M10 2 H12" stroke="#444" stroke-width="1.2"/></svg><div class="a" style="left:615px;top:104px;width:2px;height:35px;background:#9a9a9a;"></div><svg class="a" style="left:637px;top:107px;" width="26" height="26" viewBox="0 0 26 26"><circle cx="13" cy="15" r="8" fill="none" stroke="#c8c8c8" stroke-width="1.5"/><circle cx="13" cy="15" r="3" fill="#c8c8c8"/><path d="M13 0 V8 M1 24 L7 19 M25 24 L19 19" stroke="#3fb5c5" stroke-width="2"/></svg><svg class="a" style="left:672px;top:108px;" width="26" height="26" viewBox="0 0 26 26"><circle cx="7" cy="7" r="6.5" fill="#3fb5c5"/><path d="M7 3 V7 H10" stroke="#444" stroke-width="1.3" fill="none"/><path d="M10 15 H22 M5 20 H8 M10 20 H14" stroke="#3fb5c5" stroke-width="1.2"/><path d="M17 18 L23 24 M23 18 L17 24" stroke="#ddd" stroke-width="2"/></svg><svg class="a" style="left:706px;top:107px;" width="29" height="27" viewBox="0 0 29 27"><g stroke="#c8c8c8" stroke-width="1.4"><path d="M14 0 V16 M7 4 L21 12 M21 4 L7 12"/></g><text x="14" y="26" font-size="11" font-family="Liberation Sans" font-weight="bold" text-anchor="middle" fill="#3fb5c5">0,0,0</text></svg><div class="a" style="left:754px;top:104px;width:2px;height:35px;background:#9a9a9a;"></div><svg class="a" style="left:772px;top:104px;" width="35" height="35" viewBox="0 0 35 35"><path d="M7 1 H1 V34 H7 M28 1 H34 V34 H28" fill="none" stroke="#22e022" stroke-width="1.5"/><circle cx="14" cy="15" r="9" fill="#e8944a"/><circle cx="20" cy="20" r="8.5" fill="#444" stroke="#ccc" stroke-width="1.2" stroke-dasharray="2 1.5"/><polygon points="29,25 29,30 24,30" fill="#ccc"/></svg><svg class="a" style="left:811px;top:107px;" width="25" height="25" viewBox="0 0 25 25"><circle cx="12.5" cy="12.5" r="11.5" fill="none" stroke="#c8c8c8" stroke-width="1.5"/><path d="M4 13 L12.5 9 L21 13 L12.5 17 Z" fill="#e8944a"/><path d="M4 10 L12.5 6 L21 10 L12.5 14 Z" fill="#e8944a" stroke="#444" stroke-width="0.8"/></svg><svg class="a" style="left:847px;top:109px;" width="23" height="23" viewBox="0 0 23 23"><rect x="5" y="0" width="8" height="8" fill="#c8c8c8"/><rect x="14" y="0" width="8" height="8" fill="#c8c8c8"/><rect x="14" y="9" width="8" height="8" fill="#c8c8c8"/><rect x="0" y="14" width="9" height="9" fill="#e8944a"/></svg><svg class="a" style="left:879px;top:108px;" width="29" height="24" viewBox="0 0 29 24"><path d="M0 4 L6 1 L12 4 V20 L6 23 L0 20 Z M17 4 L23 1 L29 4 V20 L23 23 L17 20 Z" fill="#e8944a"/><path d="M14.5 0 V24" stroke="#ccc" stroke-dasharray="2 1.5"/></svg><svg class="a" style="left:916px;top:108px;" width="24" height="24" viewBox="0 0 24 24"><g fill="#e8944a"><rect x="11.0" y="0.0" width="2.4" height="2.4"/><rect x="11.0" y="3.2" width="2.4" height="2.4"/><rect x="11.0" y="6.4" width="2.4" height="2.4"/><rect x="11.0" y="9.6" width="2.4" height="2.4"/><rect x="14.2" y="0.0" width="2.4" height="2.4"/><rect x="14.2" y="3.2" width="2.4" height="2.4"/><rect x="14.2" y="6.4" width="2.4" height="2.4"/><rect x="14.2" y="9.6" width="2.4" height="2.4"/><rect x="17.4" y="0.0" width="2.4" height="2.4"/><rect x="17.4" y="3.2" width="2.4" height="2.4"/><rect x="17.4" y="6.4" width="2.4" height="2.4"/><rect x="17.4" y="9.6" width="2.4" height="2.4"/><rect x="20.6" y="0.0" width="2.4" height="2.4"/><rect x="20.6" y="3.2" width="2.4" height="2.4"/><rect x="20.6" y="6.4" width="2.4" height="2.4"/><rect x="20.6" y="9.6" width="2.4" height="2.4"/></g><g fill="#c8c8c8"><rect x="0" y="13" width="5" height="5"/><rect x="6" y="13" width="5" height="5"/><rect x="0" y="19" width="5" height="5"/><rect x="6" y="19" width="5" height="5"/></g></svg><svg class="a" style="left:950px;top:108px;" width="26" height="24" viewBox="0 0 26 24"><g fill="#c8c8c8"><rect x="0.0" y="13.0" width="2.6" height="2.6"/><rect x="0.0" y="16.5" width="2.6" height="2.6"/><rect x="0.0" y="20.0" width="2.6" height="2.6"/><rect x="3.5" y="13.0" width="2.6" height="2.6"/><rect x="3.5" y="16.5" width="2.6" height="2.6"/><rect x="3.5" y="20.0" width="2.6" height="2.6"/><rect x="7.0" y="13.0" width="2.6" height="2.6"/><rect x="7.0" y="16.5" width="2.6" height="2.6"/><rect x="7.0" y="20.0" width="2.6" height="2.6"/></g><rect x="8" y="0" width="18" height="18" fill="#e8944a"/><path d="M8 9 H26 M17 0 V18" stroke="#444" stroke-width="1.3"/></svg><svg class="a" style="left:986px;top:108px;" width="26" height="26" viewBox="0 0 26 26"><path d="M1 8 L15 22 L1 22 Z" fill="#e8944a"/><path d="M1 8 H15 V22" fill="#e8944a"/><path d="M1 8 L15 22" stroke="#444" stroke-width="1.2"/><path d="M13 10 A5 5 0 1 1 18 2 M26 8 A5 5 0 0 1 20 14" fill="none" stroke="#c8c8c8" stroke-width="1.6"/></svg><svg class="a" style="left:1017px;top:104px;" width="36" height="36" viewBox="0 0 36 36"><path d="M7 1 H1 V35 H7 M29 1 H35 V35 H29" fill="none" stroke="#22e022" stroke-width="1.5"/><g fill="#e8944a"><rect x="5" y="14" width="8" height="8"/><rect x="14" y="14" width="8" height="8"/><rect x="5" y="23" width="8" height="8"/><rect x="14" y="23" width="8" height="8"/></g><path d="M16 12 A5 5 0 1 1 21 4 M29 10 A5 5 0 0 1 23 16" fill="none" stroke="#c8c8c8" stroke-width="1.6"/></svg><div class="a" style="left:1068px;top:104px;width:2px;height:35px;background:#9a9a9a;"></div><svg class="a" style="left:1091px;top:107px;" width="25" height="27" viewBox="0 0 25 27"><path d="M1 3 L6 0 L11 3 V18 L6 21 L1 18 Z" fill="#e8944a"/><path d="M6 21 L17 15 L24 19 L13 25 Z" fill="#c8c8c8"/></svg><svg class="a" style="left:1122px;top:107px;" width="32" height="27" viewBox="0 0 32 27"><path d="M8 4 L13 1 L18 4 L13 7 Z M2 11 L7 8 L12 11 L7 14 Z M20 12 L25 9 L30 12 L25 15 Z M8 21 L13 18 L18 21 L13 24 Z M20 21 L25 18 L30 21 L25 24 Z" fill="#c8c8c8"/><path d="M14 11 L19 8 L24 11 L19 14 Z M14 17 L19 14 L24 17 L19 20 Z" fill="#e8944a"/></svg><svg class="a" style="left:1160px;top:108px;" width="25" height="26" viewBox="0 0 25 26"><path d="M12.5 0 L25 6 V20 L12.5 26 L0 20 V6 Z" fill="#e8944a"/><path d="M2 6 L12.5 11 L23 6 L12.5 1 Z" fill="#c8c8c8"/><path d="M11 11 H14 V26 H11 Z" fill="#c8c8c8"/></svg><svg class="a" style="left:1193px;top:108px;" width="28" height="26" viewBox="0 0 28 26"><path d="M14 0 H26 V12 H20 L17 16 L14 12 Z" fill="#e8944a"/><path d="M14 8 L22 4" stroke="#444"/><g fill="#c8c8c8"><rect x="0" y="12" width="3" height="3"/><rect x="0" y="16" width="3" height="3"/><rect x="0" y="20" width="3" height="3"/><rect x="0" y="24" width="3" height="3"/><rect x="4" y="12" width="3" height="3"/><rect x="4" y="16" width="3" height="3"/><rect x="4" y="20" width="3" height="3"/><rect x="4" y="24" width="3" height="3"/><rect x="8" y="12" width="3" height="3"/><rect x="8" y="16" width="3" height="3"/><rect x="8" y="20" width="3" height="3"/><rect x="8" y="24" width="3" height="3"/><rect x="12" y="12" width="3" height="3"/><rect x="12" y="16" width="3" height="3"/><rect x="12" y="20" width="3" height="3"/><rect x="12" y="24" width="3" height="3"/></g></svg><svg class="a" style="left:1230px;top:108px;" width="26" height="26" viewBox="0 0 26 26"><circle cx="13" cy="13" r="12.5" fill="#e8944a"/><circle cx="13" cy="13" r="9" fill="none" stroke="#444" stroke-width="1.2"/><path d="M13 1 V25 M1 13 H25 M4.5 4.5 L21.5 21.5 M21.5 4.5 L4.5 21.5" stroke="#444" stroke-width="1.2"/></svg><svg class="a" style="left:1265px;top:108px;" width="25" height="25" viewBox="0 0 25 25"><path d="M0 10 L15 25 L0 25 Z" fill="#e8944a"/><path d="M0 10 H15 V25" fill="#e8944a"/><path d="M0 10 L15 25" stroke="#444" stroke-width="1.2"/><path d="M10 0 H25 V15 H15 V10 H10 Z" fill="#c8c8c8"/><path d="M15 10 L25 0" stroke="#444" stroke-width="1"/></svg><svg class="a" style="left:1299px;top:109px;" width="28" height="22" viewBox="0 0 28 22"><path d="M0 10 L7 6 L14 10 L7 14 Z" fill="#e8944a"/><path d="M0 13 L7 9 L14 13 L7 17 Z" fill="#e8944a" stroke="#444" stroke-width="0.7"/><path d="M14 10 L21 6 L28 10 L21 14 Z M10 16 L17 12 L24 16 L17 20 Z" fill="#c8c8c8"/></svg><svg class="a" style="left:1336px;top:108px;" width="24" height="25" viewBox="0 0 24 25"><rect x="2" y="2" width="20" height="20" fill="none" stroke="#c8c8c8" stroke-dasharray="3 2"/><g fill="#444" stroke="#c8c8c8" stroke-width="1.2"><rect x="0" y="0" width="4" height="4"/><rect x="20" y="0" width="4" height="4"/><rect x="0" y="20" width="4" height="4"/><rect x="20" y="20" width="4" height="4"/></g><path d="M4 4 L9 9 M20 4 L15 9 M4 20 L9 15 M20 20 L15 15" stroke="#c8c8c8"/><rect x="9" y="9" width="6" height="6" fill="none" stroke="#e8944a" stroke-width="1.6"/></svg><svg class="a" style="left:1370px;top:108px;" width="25" height="24" viewBox="0 0 25 24"><circle cx="15" cy="9" r="9" fill="#e8944a"/><path d="M6 9 H24 M15 0 V18 M9 3 Q15 9 9 15 M21 3 Q15 9 21 15" fill="none" stroke="#444" stroke-width="1"/><g fill="#c8c8c8"><rect x="0.0" y="12.0" width="2.6" height="2.6"/><rect x="0.0" y="15.5" width="2.6" height="2.6"/><rect x="0.0" y="19.0" width="2.6" height="2.6"/><rect x="0.0" y="22.5" width="2.6" height="2.6"/><rect x="3.5" y="12.0" width="2.6" height="2.6"/><rect x="3.5" y="15.5" width="2.6" height="2.6"/><rect x="3.5" y="19.0" width="2.6" height="2.6"/><rect x="3.5" y="22.5" width="2.6" height="2.6"/><rect x="7.0" y="12.0" width="2.6" height="2.6"/><rect x="7.0" y="15.5" width="2.6" height="2.6"/><rect x="7.0" y="19.0" width="2.6" height="2.6"/><rect x="7.0" y="22.5" width="2.6" height="2.6"/></g></svg><div class="a" style="left:1417px;top:104px;width:2px;height:35px;background:#9a9a9a;"></div><svg class="a" style="left:1436px;top:107px;" width="30" height="28" viewBox="0 0 30 28"><path d="M2 10 L10 5" stroke="#e8944a" stroke-width="1.2"/><rect x="0" y="9" width="3" height="18" fill="none" stroke="#e8944a"/><circle cx="10" cy="5" r="1.5" fill="#e8944a"/><path d="M6 26 L24 6 L27 9 L9 27 Z" fill="#c8c8c8"/><path d="M6 26 L4 28 L8 27 Z" fill="#c8c8c8"/></svg><svg class="a" style="left:1474px;top:108px;" width="25" height="25" viewBox="0 0 25 25"><rect x="3" y="3" width="19" height="19" fill="none" stroke="#c8c8c8" stroke-dasharray="3 2"/><path d="M12.5 3 V22" stroke="#e8944a" stroke-width="1.5"/><g fill="#444" stroke="#c8c8c8" stroke-width="1.1"><rect x="1" y="1" width="4" height="4"/><rect x="20" y="1" width="4" height="4"/><rect x="1" y="20" width="4" height="4"/><rect x="20" y="20" width="4" height="4"/></g><g fill="#444" stroke="#e8944a" stroke-width="1.3"><rect x="10" y="0.5" width="5" height="5"/><rect x="10" y="19.5" width="5" height="5"/></g></svg><svg class="a" style="left:1507px;top:109px;" width="29" height="23" viewBox="0 0 29 23"><rect x="1" y="1" width="12" height="12" fill="none" stroke="#c8c8c8" stroke-dasharray="2.5 2"/><rect x="1" y="19" width="3" height="3" fill="#e8944a"/><path d="M9 22 L25 5 L28 8 L12 24 Z" fill="#c8c8c8"/></svg><div class="a" style="left:1556px;top:104px;width:2px;height:35px;background:#9a9a9a;"></div><svg class="a" style="left:1579px;top:109px;" width="26" height="25" viewBox="0 0 26 25"><rect x="0" y="0" width="22" height="22" fill="#5bbf8f"/><g transform="translate(16,15)"><rect width="9" height="9" fill="#ddd"/><rect x="3" y="0" width="3" height="3" fill="#444"/><rect x="0" y="3" width="3" height="3" fill="#444"/><rect x="6" y="3" width="3" height="3" fill="#444"/><rect x="3" y="6" width="3" height="3" fill="#444"/></g></svg><svg class="a" style="left:1614px;top:109px;" width="27" height="25" viewBox="0 0 27 25"><path d="M0 0 Q11 6 22 0 V18 Q11 25 0 18 Z" fill="#5bbf8f"/><g transform="translate(18,16)"><rect width="9" height="9" fill="#ddd"/><rect x="3" y="0" width="3" height="3" fill="#444"/><rect x="0" y="3" width="3" height="3" fill="#444"/><rect x="6" y="3" width="3" height="3" fill="#444"/><rect x="3" y="6" width="3" height="3" fill="#444"/></g></svg><svg class="a" style="left:1648px;top:109px;" width="28" height="25" viewBox="0 0 28 25"><path d="M0 10 Q0 0 11 2 Q22 0 24 10 V18 Q11 25 0 18 Z" fill="#5bbf8f"/><g transform="translate(19,16)"><rect width="9" height="9" fill="#ddd"/><rect x="3" y="0" width="3" height="3" fill="#444"/><rect x="0" y="3" width="3" height="3" fill="#444"/><rect x="6" y="3" width="3" height="3" fill="#444"/><rect x="3" y="6" width="3" height="3" fill="#444"/></g></svg><svg class="a" style="left:1683px;top:108px;" width="28" height="26" viewBox="0 0 28 26"><path d="M11 0 L22 6 L11 12 L0 6 Z" fill="#5bbf8f"/><path d="M0 8 L10 14 V26 L0 20 Z M12 14 L22 8 V14 L12 20 Z" fill="#5bbf8f"/><g transform="translate(19,17)"><rect width="9" height="9" fill="#ddd"/><rect x="3" y="0" width="3" height="3" fill="#444"/><rect x="0" y="3" width="3" height="3" fill="#444"/><rect x="6" y="3" width="3" height="3" fill="#444"/><rect x="3" y="6" width="3" height="3" fill="#444"/></g></svg><svg class="a" style="left:1718px;top:108px;" width="28" height="26" viewBox="0 0 28 26"><path d="M2 22 Q-2 10 12 12 Q22 14 18 4 Q24 10 18 16 Q8 18 6 24 Z" fill="#5bbf8f"/><path d="M6 14 Q10 8 16 10" fill="none" stroke="#5bbf8f" stroke-width="2.5"/><g transform="translate(19,17)"><rect width="9" height="9" fill="#ddd"/><rect x="3" y="0" width="3" height="3" fill="#444"/><rect x="0" y="3" width="3" height="3" fill="#444"/><rect x="6" y="3" width="3" height="3" fill="#444"/><rect x="3" y="6" width="3" height="3" fill="#444"/></g></svg><svg class="a" style="left:1754px;top:108px;" width="25" height="25" viewBox="0 0 25 25"><rect x="0" y="0" width="25" height="25" fill="#5bbf8f"/><rect x="2" y="5" width="21" height="18" fill="#444"/><path d="M2 2 H4 M6 2 H8 M10 2 H12" stroke="#444" stroke-width="1.2"/><g transform="translate(6,8)"><rect width="13" height="13" fill="#ddd"/><rect x="4.3" y="0" width="4.4" height="4.3" fill="#444"/><rect x="0" y="4.3" width="4.3" height="4.4" fill="#444"/><rect x="8.7" y="4.3" width="4.3" height="4.4" fill="#444"/><rect x="4.3" y="8.7" width="4.4" height="4.3" fill="#444"/></g></svg><svg class="a" style="left:1786px;top:110px;" width="29" height="22" viewBox="0 0 29 22"><path d="M9 11 L2 7 M20 11 L27 7" stroke="#5bbf8f" stroke-width="2.6"/><polygon points="0,6 6,5 4,10" fill="#5bbf8f"/><polygon points="29,6 23,5 25,10" fill="#5bbf8f"/><path d="M2 19 L14.5 12 L27 19" fill="none" stroke="#5bbf8f" stroke-width="2.8"/><polygon points="0,21 3,15 7,21" fill="#5bbf8f"/><polygon points="29,21 26,15 22,21" fill="#5bbf8f"/><g transform="translate(9.5,0)"><rect width="10" height="10" fill="#ddd"/><rect x="3.3" y="0" width="3.4" height="3.3" fill="#444"/><rect x="0" y="3.3" width="3.3" height="3.4" fill="#444"/><rect x="6.7" y="3.3" width="3.3" height="3.4" fill="#444"/><rect x="3.3" y="6.7" width="3.4" height="3.3" fill="#444"/></g></svg><svg class="a" style="left:1822px;top:108px;" width="28" height="26" viewBox="0 0 28 26"><path d="M24 2 L8 19 L6 23 L10 21 L26 4 Z" fill="#c8c8c8"/><path d="M3 3 L22 23" stroke="#c8c8c8" stroke-width="2.2"/><circle cx="3.5" cy="3.5" r="2.2" fill="none" stroke="#c8c8c8" stroke-width="1.3"/><path d="M8 3 Q14 0 17 4 M3 9 Q0 18 6 22 Q10 24 12 24" fill="none" stroke="#5bbf8f" stroke-width="1.2"/></svg><svg class="a" style="left:1901px;top:107px;" width="12" height="30" viewBox="0 0 12 30"><rect x="0" y="0" width="12" height="30" fill="#3a3a3a"/><polygon points="6,2 11,7 1,7" fill="#9a9a9a"/><circle cx="6" cy="15" r="4" fill="#6a6a6a"/><polygon points="1,23 11,23 6,28" fill="#9a9a9a"/></svg><svg class="a" style="left:2px;top:152px;" width="38" height="4" viewBox="0 0 38 4"><rect x="0" y="0" width="1" height="1" fill="#777"/><rect x="0" y="2" width="1" height="1" fill="#777"/><rect x="3" y="0" width="1" height="1" fill="#777"/><rect x="3" y="2" width="1" height="1" fill="#777"/><rect x="6" y="0" width="1" height="1" fill="#777"/><rect x="6" y="2" width="1" height="1" fill="#777"/><rect x="9" y="0" width="1" height="1" fill="#777"/><rect x="9" y="2" width="1" height="1" fill="#777"/><rect x="12" y="0" width="1" height="1" fill="#777"/><rect x="12" y="2" width="1" height="1" fill="#777"/><rect x="15" y="0" width="1" height="1" fill="#777"/><rect x="15" y="2" width="1" height="1" fill="#777"/><rect x="18" y="0" width="1" height="1" fill="#777"/><rect x="18" y="2" width="1" height="1" fill="#777"/><rect x="21" y="0" width="1" height="1" fill="#777"/><rect x="21" y="2" width="1" height="1" fill="#777"/><rect x="24" y="0" width="1" height="1" fill="#777"/><rect x="24" y="2" width="1" height="1" fill="#777"/><rect x="27" y="0" width="1" height="1" fill="#777"/><rect x="27" y="2" width="1" height="1" fill="#777"/><rect x="30" y="0" width="1" height="1" fill="#777"/><rect x="30" y="2" width="1" height="1" fill="#777"/><rect x="33" y="0" width="1" height="1" fill="#777"/><rect x="33" y="2" width="1" height="1" fill="#777"/><rect x="36" y="0" width="1" height="1" fill="#777"/><rect x="36" y="2" width="1" height="1" fill="#777"/></svg><svg class="a" style="left:13px;top:166px;" width="20" height="28" viewBox="0 0 20 28"><path d="M2 1 L2 22 L7 17 L11 27 L15 25 L11 16 L18 16 Z" fill="#c8c8c8"/></svg><svg class="a" style="left:8px;top:199px;" width="30" height="32" viewBox="0 0 30 32"><ellipse cx="12" cy="14" rx="11.5" ry="7" fill="none" stroke="#3fb5c5" stroke-width="2.5" stroke-dasharray="4 3" transform="rotate(-40 12 14)"/><path d="M14 11 L14 29 L18 25 L21 31 L24 30 L21 24 L27 24 Z" fill="#c8c8c8"/></svg><svg class="a" style="left:7px;top:236px;" width="30" height="32" viewBox="0 0 30 32"><ellipse cx="12" cy="20" rx="11" ry="7.5" fill="none" stroke="#3fb5c5" stroke-width="2.5" stroke-dasharray="4 3" transform="rotate(30 12 20)"/><path d="M18 16 L27 4" stroke="#c8c8c8" stroke-width="3.2" stroke-linecap="round"/><path d="M11 22 Q12 15 18 15 L20 18 Q18 24 11 22 Z" fill="#c8c8c8"/></svg><svg class="a" style="left:8px;top:274px;" width="28" height="32" viewBox="0 0 28 32"><rect x="8" y="9" width="12" height="12" fill="#c8c8c8"/><g fill="#3fb5c5"><polygon points="14,1 18,6 10,6"/><polygon points="14,30 18,25 10,25"/><polygon points="1,15 6,11 6,19"/><polygon points="27,15 22,11 22,19"/></g></svg><div class="a" style="left:5px;top:308px;width:34px;height:37px;background:#5285a6;"></div><svg class="a" style="left:7px;top:310px;" width="30" height="34" viewBox="0 0 30 34"><path d="M10 31 A14 14 0 1 1 28 23" fill="none" stroke="#2a4a5a" stroke-width="3"/><path d="M10 31 A14 14 0 1 1 28 23" fill="none" stroke="#3fb5c5" stroke-width="1.6"/><polygon points="24,22 31,21 28,27" fill="#3fb5c5"/><path d="M15 9 L23 17 L15 25 L7 17 Z" fill="#d0d0d0" stroke="#333" stroke-width="1.2"/></svg><svg class="a" style="left:9px;top:350px;" width="26" height="26" viewBox="0 0 26 26"><rect x="6" y="2" width="18" height="18" fill="none" stroke="#3fb5c5" stroke-width="2" stroke-dasharray="3 2.5"/><rect x="1" y="13" width="11" height="11" fill="#c8c8c8"/><path d="M12 12 L18 6 M14 6 H18 V10" fill="none" stroke="#3fb5c5" stroke-width="1.5"/></svg><svg class="a" style="left:7px;top:422px;" width="30" height="30" viewBox="0 0 30 30"><path d="M15 4 L15 18 L4 25 M15 18 L26 25" stroke="#3fb5c5" stroke-width="1.3" fill="none"/><rect x="11" y="14" width="8" height="8" fill="#444" stroke="#3fb5c5" stroke-width="1.4"/><g fill="#3fb5c5"><polygon points="15,0 18,6 12,6"/><polygon points="1,28 4,22 7,27"/><polygon points="29,28 26,22 23,27"/></g><path d="M20 4 H30 M20 8 H30" stroke="#c8c8c8" stroke-width="1"/><circle cx="23" cy="4" r="1.5" fill="#c8c8c8"/><circle cx="27" cy="8" r="1.5" fill="#c8c8c8"/></svg><div class="a" style="left:7px;top:461px;width:30px;height:2px;background:#8a8a8a;"></div><svg class="a" style="left:7px;top:471px;" width="30" height="30" viewBox="0 0 30 30"><rect x="1" y="1" width="28" height="28" fill="#d0d0d0"/><rect x="3" y="3" width="24" height="24" fill="#5a5a5a" stroke="#444"/><path d="M15 8 L22 15 L15 22 L8 15 Z" fill="#d0d0d0"/><path d="M11.5 11.5 L18.5 18.5 M18.5 11.5 L11.5 18.5" stroke="#5a5a5a" stroke-width="1.5"/></svg><svg class="a" style="left:7px;top:508px;" width="30" height="29" viewBox="0 0 30 29"><g fill="none" stroke="#d0d0d0" stroke-width="1.4"><rect x="1" y="1" width="13" height="13"/><rect x="16" y="1" width="13" height="13"/><rect x="1" y="15" width="13" height="13"/><rect x="16" y="15" width="13" height="13"/></g><rect x="16" y="1" width="13" height="13" fill="#d0d0d0"/><path d="M7.5 4 V11 M4 7.5 H11 M7.5 18 V25 M4 21.5 H11 M22.5 18 V25 M19 21.5 H26" stroke="#d0d0d0" stroke-width="1.4"/><path d="M22.5 5 L26 7.5 L22.5 10 L19 7.5 Z" fill="#444"/></svg><svg class="a" style="left:7px;top:544px;" width="30" height="29" viewBox="0 0 30 29"><rect x="1" y="1" width="13" height="27" fill="none" stroke="#d0d0d0" stroke-width="1.4"/><rect x="16" y="1" width="13" height="27" fill="#d0d0d0"/><path d="M7.5 11 V18 M4 14.5 H11" stroke="#d0d0d0" stroke-width="1.4"/><path d="M22.5 11.5 L26 14.5 L22.5 17.5 L19 14.5 Z" fill="#444"/></svg><svg class="a" style="left:7px;top:580px;" width="30" height="30" viewBox="0 0 30 30"><rect x="1" y="1" width="28" height="28" fill="none" stroke="#d0d0d0" stroke-width="1.4"/><path d="M7 6 V24 M7 10 H11 M7 15 H11 M7 20 H11" stroke="#d0d0d0" stroke-width="1.2"/><path d="M12 6 H24 M13 10 H24 M13 15 H24 M13 20 H24 M13 24 H24" stroke="#d0d0d0" stroke-width="1.6"/></svg><div class="a" style="left:7px;top:619px;width:30px;height:2px;background:#8a8a8a;"></div><svg class="a" style="left:10px;top:634px;" width="24" height="23" viewBox="0 0 24 23"><circle cx="9" cy="9" r="7" fill="none" stroke="#c8c8c8" stroke-width="2.4"/><path d="M14 14 L22 22" stroke="#c8c8c8" stroke-width="3"/></svg><div class="a" style="left:46px;top:151px;width:18px;height:65px;background:#383838;border:1px solid #333;border-radius:2px"></div><div class="a t" style="left:47px;top:204px;font-size:11px;line-height:14px;color:#a8a8a8;transform-origin:0 0;transform:rotate(-90deg) scaleX(1.1160)">Outliner</div><svg class="a" style="left:6px;top:889px;" width="32" height="33" viewBox="0 0 32 33"><path d="M3 1 L28 1 L31 4 L31 33 L6 33 L3 30 Z" fill="#3a9fcf"/><path d="M0 5 L3 1 L3 26 L0 30 Z" fill="#2a80ad"/><rect x="6" y="23" width="25" height="10" fill="#2c6f91"/><text x="17" y="19" font-size="17" font-weight="bold" fill="#fff" text-anchor="middle" font-family="Liberation Sans">M</text><text x="18" y="31" font-size="6.5" font-weight="bold" fill="#eee" text-anchor="middle" font-family="Liberation Sans">AYA</text></svg><div class="a" style="left:1904px;top:151px;width:16px;height:156px;background:#3c3c3c;border:1px solid #353535;border-radius:2px"></div><div class="a" style="left:1904px;top:309px;width:16px;height:102px;background:#3c3c3c;border:1px solid #353535;border-radius:2px"></div><div class="a" style="left:1904px;top:413px;width:16px;height:109px;background:#3c3c3c;border:1px solid #353535;border-radius:2px"></div><div class="a t" style="left:1905px;top:294px;font-size:11px;line-height:14px;color:#a8a8a8;transform-origin:0 0;transform:rotate(-90deg) scaleX(1.0040)">Channel Box / Layer Editor</div><div class="a t" style="left:1905px;top:399.5px;font-size:11px;line-height:14px;color:#a8a8a8;transform-origin:0 0;transform:rotate(-90deg) scaleX(1.1269)">Attribute Editor</div><div class="a t" style="left:1905px;top:510.5px;font-size:11px;line-height:14px;color:#a8a8a8;transform-origin:0 0;transform:rotate(-90deg) scaleX(1.1183)">Modeling Toolkit</div><div class="a t" style="left:77px;top:155.84px;font-size:12px;line-height:12px;color:#c8c8c8;;transform-origin:0 0;transform:scaleX(1.0079)">View</div><div class="a t" style="left:117px;top:155.84px;font-size:12px;line-height:12px;color:#c8c8c8;;transform-origin:0 0;transform:scaleX(0.9989)">Shading</div><div class="a t" style="left:175px;top:155.84px;font-size:12px;line-height:12px;color:#c8c8c8;;transform-origin:0 0;transform:scaleX(1.0536)">Lighting</div><div class="a t" style="left:233px;top:155.84px;font-size:12px;line-height:12px;color:#c8c8c8;;transform-origin:0 0;transform:scaleX(0.9990)">Show</div><div class="a t" style="left:277px;top:155.84px;font-size:12px;line-height:12px;color:#c8c8c8;;transform-origin:0 0;transform:scaleX(0.9594)">Renderer</div><div class="a t" style="left:339px;top:155.84px;font-size:12px;line-height:12px;color:#c8c8c8;;transform-origin:0 0;transform:scaleX(0.8991)">Panels</div><svg class="a" style="left:71px;top:172px;" width="4" height="18" viewBox="0 0 4 18"><rect x="1.5" y="0" width="1" height="18" fill="#7a7a7a"/><rect x="0.5" y="5.0" width="3" height="7.9" rx="1" fill="#7a7a7a"/></svg><svg class="a" style="left:80px;top:173px;" width="16" height="17" viewBox="0 0 16 17"><path d="M2 1 H15 V15 L13 17 H0 V3 Z" fill="#3fb5c5"/><path d="M0 3 L2 1 H15 L13 3 Z" fill="#8fd6e6"/><path d="M13 3 V17 L15 15 V1 Z" fill="#1f7f99"/><text x="6.5" y="13" font-size="10" font-weight="bold" fill="#fff" text-anchor="middle" font-family="Liberation Sans">A</text></svg><svg class="a" style="left:100px;top:173px;" width="14" height="16" viewBox="0 0 14 16"><rect x="2" y="3" width="10" height="10" fill="#3fb5c5"/><g fill="#999"><rect x="0" y="1" width="3" height="3"/><rect x="11" y="1" width="3" height="3"/><rect x="0" y="12" width="3" height="3"/><rect x="11" y="12" width="3" height="3"/></g></svg><svg class="a" style="left:119px;top:174px;" width="15" height="15" viewBox="0 0 15 15"><rect x="0" y="0" width="15" height="15" fill="#4a5660"/><path d="M0 5 H15 M5 5 V15" stroke="#3a4650"/></svg><svg class="a" style="left:138px;top:174px;" width="14" height="15" viewBox="0 0 14 15"><circle cx="7" cy="7.5" r="6.5" fill="#5a5055"/><path d="M7 1 V14" stroke="#4a5a55"/></svg><svg class="a" style="left:156px;top:173px;" width="16" height="16" viewBox="0 0 16 16"><rect x="1" y="3" width="14" height="12" fill="#4a5a58"/><rect x="3" y="1" width="13" height="12" fill="none" stroke="#4a5a4a"/></svg><svg class="a" style="left:176px;top:172px;" width="4" height="18" viewBox="0 0 4 18"><rect x="1.5" y="0" width="1" height="18" fill="#7a7a7a"/><rect x="0.5" y="5.0" width="3" height="7.9" rx="1" fill="#7a7a7a"/></svg><svg class="a" style="left:187px;top:175px;" width="15" height="12" viewBox="0 0 15 12"><rect x="0" y="3" width="10" height="7" fill="#c8c8c8"/><polygon points="10,6.5 15,2 15,11" fill="#c8c8c8"/></svg><svg class="a" style="left:205px;top:174px;" width="16" height="15" viewBox="0 0 16 15"><rect x="4" y="1" width="8" height="7" fill="#c8c8c8"/><polygon points="12,4.5 16,1 16,8" fill="#c8c8c8"/><rect x="1" y="9" width="7" height="6" fill="#3fb5c5"/><path d="M2.5 9 V7 A2 2 0 0 1 6.5 7 V9" fill="none" stroke="#3fb5c5" stroke-width="1.3"/></svg><svg class="a" style="left:224px;top:174px;" width="16" height="15" viewBox="0 0 16 15"><rect x="4" y="1" width="8" height="7" fill="#c8c8c8"/><polygon points="12,4.5 16,1 16,8" fill="#c8c8c8"/><circle cx="5" cy="11" r="3.5" fill="none" stroke="#3fb5c5" stroke-width="2"/></svg><svg class="a" style="left:248px;top:174px;" width="7" height="14" viewBox="0 0 7 14"><path d="M0 0 H7 V14 L3.5 10 L0 14 Z" fill="#c8c8c8"/></svg><svg class="a" style="left:263px;top:174px;" width="15" height="16" viewBox="0 0 15 16"><path d="M5 12 L14 1 V9 L7 14 Z" fill="#3fb5c5"/><path d="M0 15 H12 M2 12 L6 15 M6 12 L10 15" stroke="#c8c8c8" stroke-width="1.2"/></svg><svg class="a" style="left:282px;top:173px;" width="15" height="16" viewBox="0 0 15 16"><path d="M5 1 V10 M1 5 H9" stroke="#c8c8c8" stroke-width="1.4"/><polygon points="5,0 7,3 3,3" fill="#c8c8c8"/><polygon points="0,5 3,3 3,7" fill="#c8c8c8"/><circle cx="10" cy="9" r="3.5" fill="none" stroke="#3fb5c5" stroke-width="1.8"/><path d="M7.5 11.5 L4 15" stroke="#3fb5c5" stroke-width="2"/></svg><svg class="a" style="left:299px;top:172px;" width="19" height="19" viewBox="0 0 19 19"><path d="M4 0.5 H0.5 V18.5 H4 M15 0.5 H18.5 V18.5 H15" fill="none" stroke="#22e022" stroke-width="1.2"/><path d="M5 15 L14 4 L16 6 L7 17 Z" fill="#3fb5c5"/><path d="M5 15 L4 18 L7 17 Z" fill="#3fb5c5"/></svg><svg class="a" style="left:320px;top:172px;" width="4" height="18" viewBox="0 0 4 18"><rect x="1.5" y="0" width="1" height="18" fill="#7a7a7a"/><rect x="0.5" y="5.0" width="3" height="7.9" rx="1" fill="#7a7a7a"/></svg><svg class="a" style="left:333px;top:174px;" width="11" height="15" viewBox="0 0 11 15"><g fill="none" stroke="#c8c8c8" stroke-width="1.1"><rect x="0.5" y="2.5" width="10" height="10"/><path d="M3.8 2.5 V12.5 M7.2 2.5 V12.5 M0.5 5.8 H10.5 M0.5 9.2 H10.5"/></g></svg><svg class="a" style="left:350px;top:174px;" width="14" height="15" viewBox="0 0 14 15"><rect x="0.5" y="2.5" width="13" height="10" fill="none" stroke="#c8c8c8" stroke-width="1.1"/><path d="M0.5 4.5 H13.5 M0.5 10.5 H13.5" stroke="#c8c8c8" stroke-width="0.8" stroke-dasharray="1 1"/></svg><svg class="a" style="left:369px;top:174px;" width="14" height="15" viewBox="0 0 14 15"><rect x="0.5" y="1.5" width="13" height="12" fill="none" stroke="#c8c8c8" stroke-width="1.1"/><circle cx="7" cy="7.5" r="3" fill="#3fb5c5"/></svg><div class="a" style="left:387px;top:172px;width:17px;height:18px;background:#3e3e3e;"></div><svg class="a" style="left:390px;top:175px;" width="11" height="11" viewBox="0 0 11 11"><circle cx="5.5" cy="5.5" r="5" fill="#555"/></svg><svg class="a" style="left:407px;top:174px;" width="14" height="15" viewBox="0 0 14 15"><rect x="0.5" y="1.5" width="13" height="12" fill="none" stroke="#c8c8c8" stroke-width="1.1"/><path d="M7 3 V12 M2 7.5 H12" stroke="#3fb5c5" stroke-dasharray="1.5 1"/></svg><svg class="a" style="left:426px;top:174px;" width="14" height="15" viewBox="0 0 14 15"><rect x="0.5" y="1.5" width="13" height="12" fill="none" stroke="#c8c8c8" stroke-width="1.1"/><polygon points="2,12 6,6 9,12" fill="#3fb5c5"/><circle cx="10" cy="5" r="2.5" fill="#3fb5c5"/></svg><svg class="a" style="left:445px;top:174px;" width="14" height="15" viewBox="0 0 14 15"><rect x="0.5" y="1.5" width="13" height="12" fill="none" stroke="#c8c8c8" stroke-width="1.1"/><text x="7" y="12" font-size="11" font-family="Liberation Serif" font-weight="bold" text-anchor="middle" fill="#3fb5c5">T</text></svg><svg class="a" style="left:464px;top:172px;" width="4" height="18" viewBox="0 0 4 18"><rect x="1.5" y="0" width="1" height="18" fill="#7a7a7a"/><rect x="0.5" y="5.0" width="3" height="7.9" rx="1" fill="#7a7a7a"/></svg><svg class="a" style="left:476px;top:173px;" width="14" height="16" viewBox="0 0 14 16"><path d="M7 1 L13 4 V12 L7 15 L1 12 V4 Z M1 4 L7 7 L13 4 M7 7 V15" fill="none" stroke="#c8c8c8" stroke-width="1.1"/></svg><div class="a" style="left:492px;top:172px;width:18px;height:18px;background:#5285a6;"></div><svg class="a" style="left:494px;top:173px;" width="14" height="16" viewBox="0 0 14 16"><path d="M7 1 L13 4 V12 L7 15 L1 12 V4 Z" fill="#3fb5c5"/><path d="M1 4 L7 7 L13 4 L7 1 Z" fill="#9fe0ea"/><path d="M1 4 L7 7 L13 4 M7 7 V15" fill="none" stroke="#333" stroke-width="0.8"/></svg><svg class="a" style="left:513px;top:174px;" width="14" height="14" viewBox="0 0 14 14"><circle cx="7" cy="7" r="6.5" fill="#c8c8c8"/><path d="M7 0.5 A6.5 6.5 0 0 1 7 13.5 Z" fill="#444"/><g fill="#c8c8c8"><rect x="8" y="2" width="2" height="2"/><rect x="10" y="4" width="2" height="2"/><rect x="8" y="6" width="2" height="2"/><rect x="10" y="8" width="2" height="2"/><rect x="8" y="10" width="2" height="2"/></g></svg><svg class="a" style="left:532px;top:173px;" width="14" height="16" viewBox="0 0 14 16"><path d="M7 1 L13 4 V12 L7 15 L1 12 V4 Z M1 4 L7 7 L13 4 M7 7 V15" fill="none" stroke="#c8c8c8" stroke-width="1.1"/><path d="M4 4 L7 2.5 L10 4 L7 5.5 Z" fill="#3fb5c5"/></svg><div class="a" style="left:549px;top:172px;width:18px;height:18px;background:#5285a6;"></div><svg class="a" style="left:551px;top:174px;" width="14" height="14" viewBox="0 0 14 14"><rect x="0" y="0" width="2" height="2" fill="#ddd"/><rect x="0" y="2" width="2" height="2" fill="#222"/><rect x="0" y="4" width="2" height="2" fill="#ddd"/><rect x="0" y="6" width="2" height="2" fill="#222"/><rect x="0" y="8" width="2" height="2" fill="#ddd"/><rect x="0" y="10" width="2" height="2" fill="#222"/><rect x="0" y="12" width="2" height="2" fill="#ddd"/><rect x="2" y="0" width="2" height="2" fill="#222"/><rect x="2" y="2" width="2" height="2" fill="#ddd"/><rect x="2" y="4" width="2" height="2" fill="#222"/><rect x="2" y="6" width="2" height="2" fill="#ddd"/><rect x="2" y="8" width="2" height="2" fill="#222"/><rect x="2" y="10" width="2" height="2" fill="#ddd"/><rect x="2" y="12" width="2" height="2" fill="#222"/><rect x="4" y="0" width="2" height="2" fill="#ddd"/><rect x="4" y="2" width="2" height="2" fill="#222"/><rect x="4" y="4" width="2" height="2" fill="#ddd"/><rect x="4" y="6" width="2" height="2" fill="#222"/><rect x="4" y="8" width="2" height="2" fill="#ddd"/><rect x="4" y="10" width="2" height="2" fill="#222"/><rect x="4" y="12" width="2" height="2" fill="#ddd"/><rect x="6" y="0" width="2" height="2" fill="#222"/><rect x="6" y="2" width="2" height="2" fill="#ddd"/><rect x="6" y="4" width="2" height="2" fill="#222"/><rect x="6" y="6" width="2" height="2" fill="#ddd"/><rect x="6" y="8" width="2" height="2" fill="#222"/><rect x="6" y="10" width="2" height="2" fill="#ddd"/><rect x="6" y="12" width="2" height="2" fill="#222"/><rect x="8" y="0" width="2" height="2" fill="#ddd"/><rect x="8" y="2" width="2" height="2" fill="#222"/><rect x="8" y="4" width="2" height="2" fill="#ddd"/><rect x="8" y="6" width="2" height="2" fill="#222"/><rect x="8" y="8" width="2" height="2" fill="#ddd"/><rect x="8" y="10" width="2" height="2" fill="#222"/><rect x="8" y="12" width="2" height="2" fill="#ddd"/><rect x="10" y="0" width="2" height="2" fill="#222"/><rect x="10" y="2" width="2" height="2" fill="#ddd"/><rect x="10" y="4" width="2" height="2" fill="#222"/><rect x="10" y="6" width="2" height="2" fill="#ddd"/><rect x="10" y="8" width="2" height="2" fill="#222"/><rect x="10" y="10" width="2" height="2" fill="#ddd"/><rect x="10" y="12" width="2" height="2" fill="#222"/><rect x="12" y="0" width="2" height="2" fill="#ddd"/><rect x="12" y="2" width="2" height="2" fill="#222"/><rect x="12" y="4" width="2" height="2" fill="#ddd"/><rect x="12" y="6" width="2" height="2" fill="#222"/><rect x="12" y="8" width="2" height="2" fill="#ddd"/><rect x="12" y="10" width="2" height="2" fill="#222"/><rect x="12" y="12" width="2" height="2" fill="#ddd"/><path d="M7 0 A7 7 0 1 0 7.01 0 Z M-1 -1 H15 V15 H-1 Z" fill="#5285a6" fill-rule="evenodd"/></svg><svg class="a" style="left:570px;top:173px;" width="14" height="17" viewBox="0 0 14 17"><circle cx="7" cy="7" r="4" fill="#c8c8c8"/><rect x="5" y="11" width="4" height="4" fill="#c8c8c8"/><path d="M1 2 L3 3.5 M13 2 L11 3.5 M0 7 H2 M12 7 H14" stroke="#c8c8c8"/></svg><div class="a" style="left:587px;top:172px;width:18px;height:18px;background:#5285a6;"></div><svg class="a" style="left:589px;top:174px;" width="15" height="15" viewBox="0 0 15 15"><circle cx="9" cy="6" r="5.5" fill="#3fb5c5"/><ellipse cx="4" cy="11" rx="4" ry="2.5" fill="#c8c8c8" transform="rotate(30 4 11)"/></svg><svg class="a" style="left:608px;top:172px;" width="4" height="18" viewBox="0 0 4 18"><rect x="1.5" y="0" width="1" height="18" fill="#7a7a7a"/><rect x="0.5" y="5.0" width="3" height="7.9" rx="1" fill="#7a7a7a"/></svg><div class="a" style="left:617px;top:172px;width:18px;height:18px;background:#5285a6;"></div><svg class="a" style="left:619px;top:173px;" width="15" height="16" viewBox="0 0 15 16"><circle cx="7.5" cy="6" r="5.5" fill="#c8c8c8"/><path d="M1 12 L7.5 9 L14 12 L7.5 15 Z" fill="#3fb5c5" stroke="#333" stroke-width="0.6"/></svg><svg class="a" style="left:638px;top:174px;" width="15" height="15" viewBox="0 0 15 15"><circle cx="10" cy="4.5" r="4.5" fill="#c8c8c8"/><circle cx="6" cy="8" r="3.5" fill="#777"/><circle cx="3" cy="12" r="3" fill="#555"/></svg><svg class="a" style="left:657px;top:174px;" width="13" height="15" viewBox="0 0 13 15"><path d="M7 1 A6.5 6.5 0 0 0 7 14" fill="none" stroke="#3fb5c5" stroke-width="2.2"/><path d="M8 1 A6.5 6.5 0 0 1 8 14" fill="none" stroke="#c8c8c8" stroke-width="2" stroke-dasharray="2 2"/></svg><div class="a" style="left:674px;top:172px;width:18px;height:18px;background:#3b3b3b;"></div><svg class="a" style="left:677px;top:175px;" width="12" height="12" viewBox="0 0 12 12"><rect x="0" y="0" width="8" height="8" fill="#3a4a4e"/><rect x="4" y="4" width="8" height="8" fill="#46575c"/></svg><svg class="a" style="left:695px;top:172px;" width="4" height="18" viewBox="0 0 4 18"><rect x="1.5" y="0" width="1" height="18" fill="#7a7a7a"/><rect x="0.5" y="5.0" width="3" height="7.9" rx="1" fill="#7a7a7a"/></svg><svg class="a" style="left:707px;top:174px;" width="14" height="15" viewBox="0 0 14 15"><rect x="0.5" y="0.5" width="9" height="9" fill="none" stroke="#3fb5c5" stroke-width="1.2" stroke-dasharray="2 1.5"/><path d="M6 5 L6 15 L8.5 12.5 L11 15.5 L12.5 14.5 L10 11.5 L13 11.5 Z" fill="#c8c8c8"/></svg><svg class="a" style="left:726px;top:172px;" width="4" height="18" viewBox="0 0 4 18"><rect x="1.5" y="0" width="1" height="18" fill="#7a7a7a"/><rect x="0.5" y="5.0" width="3" height="7.9" rx="1" fill="#7a7a7a"/></svg><svg class="a" style="left:737px;top:174px;" width="13" height="13" viewBox="0 0 13 13"><rect x="4" y="0" width="9" height="9" fill="#c8c8c8"/><rect x="0" y="4" width="9" height="9" fill="#c8c8c8" stroke="#444" stroke-width="1"/></svg><svg class="a" style="left:756px;top:174px;" width="13" height="13" viewBox="0 0 13 13"><rect x="4.5" y="0.5" width="8" height="8" fill="none" stroke="#c8c8c8" stroke-width="1.3"/><rect x="0" y="4" width="9" height="9" fill="#c8c8c8"/></svg><div class="a" style="left:772px;top:172px;width:18px;height:18px;background:transparent;border:1px solid #5285a6"></div><svg class="a" style="left:775px;top:175px;" width="12" height="12" viewBox="0 0 12 12"><rect x="0.5" y="0.5" width="11" height="11" fill="none" stroke="#c8c8c8" stroke-width="1.2"/><path d="M3 9 L9 3" stroke="#c8c8c8" stroke-width="1.3"/><circle cx="4" cy="4" r="1" fill="#c8c8c8"/></svg><svg class="a" style="left:793px;top:172px;" width="4" height="18" viewBox="0 0 4 18"><rect x="1.5" y="0" width="1" height="18" fill="#7a7a7a"/><rect x="0.5" y="5.0" width="3" height="7.9" rx="1" fill="#7a7a7a"/></svg><svg class="a" style="left:806px;top:175px;" width="13" height="13" viewBox="0 0 13 13"><circle cx="6.5" cy="6.5" r="6" fill="#c8c8c8"/><path d="M6.5 0.5 L4 6 M12.5 6.5 L7 4.5 M6.5 12.5 L9 7 M0.5 6.5 L6 8.5" stroke="#444" stroke-width="1.3"/><circle cx="6.5" cy="6.5" r="2.2" fill="#444"/></svg><div class="a" style="left:823px;top:173px;width:38px;height:17px;background:#2b2b2b;border-radius:3px"></div><div class="a t" style="left:828px;top:175.84px;font-size:12px;line-height:12px;color:#d8d8d8;">0.00</div><svg class="a" style="left:867px;top:174px;" width="11" height="14" viewBox="0 0 11 14"><path d="M5 1 H10 V13 H5 Z" fill="#c8c8c8"/><path d="M5 4 A3 3 0 0 0 5 10 Z" fill="#c8c8c8"/></svg><div class="a" style="left:884px;top:173px;width:38px;height:17px;background:#2b2b2b;border-radius:3px"></div><div class="a t" style="left:889px;top:175.84px;font-size:12px;line-height:12px;color:#d8d8d8;">1.00</div><div class="a" style="left:925px;top:172px;width:18px;height:18px;background:#5285a6;"></div><svg class="a" style="left:927px;top:174px;" width="14" height="14" viewBox="0 0 14 14"><circle cx="7" cy="7" r="6.5" fill="#3fb5c5" stroke="#333" stroke-width="0.8"/><text x="7" y="9.5" font-size="6" font-weight="bold" font-family="Liberation Sans" text-anchor="middle" fill="#222">ON</text></svg><div class="a" style="left:946px;top:172px;width:198px;height:18px;background:#5a5a5a;border-radius:2px"></div><div class="a" style="left:1123px;top:172px;width:1px;height:18px;background:#4e4e4e;"></div><div class="a t" style="left:949px;top:176.84px;font-size:12px;line-height:12px;color:#cfcfcf;;transform-origin:0 0;transform:scaleX(0.8577)">ACES 1.0 SDR-video (sRGB)</div><svg class="a" style="left:1129px;top:178px;" width="10" height="6" viewBox="0 0 10 6"><polygon points="0,0 10,0 5.0,6" fill="#c8c8c8"/></svg><div class="a" style="left:1814px;top:225px;width:51px;height:50px;background:linear-gradient(#e8e6e8,#cfcdcf);border:1px solid #8a8a8a"></div><div class="a t" style="left:1822px;top:246.10px;font-size:8.5px;line-height:8.5px;color:#858585;font-weight:bold;transform-origin:0 0;transform:scaleX(1.3420)">RIGHT</div><div class="a t" style="left:962px;top:907.11px;font-size:10.5px;line-height:10.5px;color:#ffffff;font-weight:bold;text-shadow:0 0 2px #3a3a3a;transform-origin:0 0;transform:scaleX(0.9792)">persp</div><svg class="a" style="left:74px;top:874px;" width="26" height="28" viewBox="0 0 26 28"><path d="M19 6 V26" stroke="#00e000" stroke-width="1.3"/><path d="M9 26 H19" stroke="#1010ff" stroke-width="1.3"/><text x="19" y="6" font-size="8" fill="#00e000" text-anchor="middle" font-family="Liberation Sans" font-weight="bold">y</text><text x="4" y="24" font-size="8" fill="#1010ff" font-family="Liberation Sans" font-weight="bold">z</text><path d="M17 21 L21 25 M21 21 L17 25" stroke="#e00000" stroke-width="1"/></svg><svg class="a" style="left:3px;top:935px;" width="6" height="31" viewBox="0 0 6 31"><rect x="0" y="0" width="1" height="1" fill="#777"/><rect x="3" y="0" width="1" height="1" fill="#777"/><rect x="0" y="3" width="1" height="1" fill="#777"/><rect x="3" y="3" width="1" height="1" fill="#777"/><rect x="0" y="6" width="1" height="1" fill="#777"/><rect x="3" y="6" width="1" height="1" fill="#777"/><rect x="0" y="9" width="1" height="1" fill="#777"/><rect x="3" y="9" width="1" height="1" fill="#777"/><rect x="0" y="12" width="1" height="1" fill="#777"/><rect x="3" y="12" width="1" height="1" fill="#777"/><rect x="0" y="15" width="1" height="1" fill="#777"/><rect x="3" y="15" width="1" height="1" fill="#777"/><rect x="0" y="18" width="1" height="1" fill="#777"/><rect x="3" y="18" width="1" height="1" fill="#777"/><rect x="0" y="21" width="1" height="1" fill="#777"/><rect x="3" y="21" width="1" height="1" fill="#777"/><rect x="0" y="24" width="1" height="1" fill="#777"/><rect x="3" y="24" width="1" height="1" fill="#777"/><rect x="0" y="27" width="1" height="1" fill="#777"/><rect x="3" y="27" width="1" height="1" fill="#777"/><rect x="0" y="30" width="1" height="1" fill="#777"/><rect x="3" y="30" width="1" height="1" fill="#777"/></svg><div class="a" style="left:13px;top:935px;width:1612px;height:31px;background:#2b2b2b;"></div><div class="a" style="left:20px;top:948px;width:2px;height:17px;background:#9e9e9e;"></div><div class="a t" style="left:24px;top:934.69px;font-size:11px;line-height:11px;color:#9a9a9a;">0</div><div class="a" style="left:52px;top:948px;width:2px;height:17px;background:#9e9e9e;"></div><div class="a t" style="left:56px;top:934.69px;font-size:11px;line-height:11px;color:#9a9a9a;">2</div><div class="a" style="left:83px;top:948px;width:2px;height:17px;background:#9e9e9e;"></div><div class="a t" style="left:87px;top:934.69px;font-size:11px;line-height:11px;color:#9a9a9a;">4</div><div class="a" style="left:115px;top:948px;width:2px;height:17px;background:#9e9e9e;"></div><div class="a t" style="left:119px;top:934.69px;font-size:11px;line-height:11px;color:#9a9a9a;">6</div><div class="a" style="left:146px;top:948px;width:2px;height:17px;background:#9e9e9e;"></div><div class="a t" style="left:150px;top:934.69px;font-size:11px;line-height:11px;color:#9a9a9a;">8</div><div class="a" style="left:178px;top:948px;width:2px;height:17px;background:#9e9e9e;"></div><div class="a t" style="left:182px;top:934.69px;font-size:11px;line-height:11px;color:#9a9a9a;">10</div><div class="a" style="left:210px;top:948px;width:2px;height:17px;background:#9e9e9e;"></div><div class="a t" style="left:214px;top:934.69px;font-size:11px;line-height:11px;color:#9a9a9a;">12</div><div class="a" style="left:241px;top:948px;width:2px;height:17px;background:#9e9e9e;"></div><div class="a t" style="left:245px;top:934.69px;font-size:11px;line-height:11px;color:#9a9a9a;">14</div><div class="a" style="left:273px;top:948px;width:2px;height:17px;background:#9e9e9e;"></div><div class="a t" style="left:277px;top:934.69px;font-size:11px;line-height:11px;color:#9a9a9a;">16</div><div class="a" style="left:304px;top:948px;width:2px;height:17px;background:#9e9e9e;"></div><div class="a t" style="left:308px;top:934.69px;font-size:11px;line-height:11px;color:#9a9a9a;">18</div><div class="a" style="left:336px;top:948px;width:2px;height:17px;background:#9e9e9e;"></div><div class="a t" style="left:340px;top:934.69px;font-size:11px;line-height:11px;color:#9a9a9a;">20</div><div class="a" style="left:368px;top:948px;width:2px;height:17px;background:#9e9e9e;"></div><div class="a t" style="left:372px;top:934.69px;font-size:11px;line-height:11px;color:#9a9a9a;">22</div><div class="a" style="left:399px;top:948px;width:2px;height:17px;background:#9e9e9e;"></div><div class="a t" style="left:403px;top:934.69px;font-size:11px;line-height:11px;color:#9a9a9a;">24</div><div class="a" style="left:431px;top:948px;width:2px;height:17px;background:#9e9e9e;"></div><div class="a t" style="left:435px;top:934.69px;font-size:11px;line-height:11px;color:#9a9a9a;">26</div><div class="a" style="left:462px;top:948px;width:2px;height:17px;background:#9e9e9e;"></div><div class="a t" style="left:466px;top:934.69px;font-size:11px;line-height:11px;color:#9a9a9a;">28</div><div class="a" style="left:494px;top:948px;width:2px;height:17px;background:#9e9e9e;"></div><div class="a t" style="left:498px;top:934.69px;font-size:11px;line-height:11px;color:#9a9a9a;">30</div><div class="a" style="left:526px;top:948px;width:2px;height:17px;background:#9e9e9e;"></div><div class="a t" style="left:530px;top:934.69px;font-size:11px;line-height:11px;color:#9a9a9a;">32</div><div class="a" style="left:557px;top:948px;width:2px;height:17px;background:#9e9e9e;"></div><div class="a t" style="left:561px;top:934.69px;font-size:11px;line-height:11px;color:#9a9a9a;">34</div><div class="a" style="left:589px;top:948px;width:2px;height:17px;background:#9e9e9e;"></div><div class="a t" style="left:593px;top:934.69px;font-size:11px;line-height:11px;color:#9a9a9a;">36</div><div class="a" style="left:620px;top:948px;width:2px;height:17px;background:#9e9e9e;"></div><div class="a t" style="left:624px;top:934.69px;font-size:11px;line-height:11px;color:#9a9a9a;">38</div><div class="a" style="left:652px;top:948px;width:2px;height:17px;background:#9e9e9e;"></div><div class="a t" style="left:656px;top:934.69px;font-size:11px;line-height:11px;color:#9a9a9a;">40</div><div class="a" style="left:684px;top:948px;width:2px;height:17px;background:#9e9e9e;"></div><div class="a t" style="left:688px;top:934.69px;font-size:11px;line-height:11px;color:#9a9a9a;">42</div><div class="a" style="left:715px;top:948px;width:2px;height:17px;background:#9e9e9e;"></div><div class="a t" style="left:719px;top:934.69px;font-size:11px;line-height:11px;color:#9a9a9a;">44</div><div class="a" style="left:747px;top:948px;width:2px;height:17px;background:#9e9e9e;"></div><div class="a t" style="left:751px;top:934.69px;font-size:11px;line-height:11px;color:#9a9a9a;">46</div><div class="a" style="left:778px;top:948px;width:2px;height:17px;background:#9e9e9e;"></div><div class="a t" style="left:782px;top:934.69px;font-size:11px;line-height:11px;color:#9a9a9a;">48</div><div class="a" style="left:810px;top:948px;width:2px;height:17px;background:#9e9e9e;"></div><div class="a t" style="left:814px;top:934.69px;font-size:11px;line-height:11px;color:#9a9a9a;">50</div><div class="a" style="left:842px;top:948px;width:2px;height:17px;background:#9e9e9e;"></div><div class="a t" style="left:846px;top:934.69px;font-size:11px;line-height:11px;color:#9a9a9a;">52</div><div class="a" style="left:873px;top:948px;width:2px;height:17px;background:#9e9e9e;"></div><div class="a t" style="left:877px;top:934.69px;font-size:11px;line-height:11px;color:#9a9a9a;">54</div><div class="a" style="left:905px;top:948px;width:2px;height:17px;background:#9e9e9e;"></div><div class="a t" style="left:909px;top:934.69px;font-size:11px;line-height:11px;color:#9a9a9a;">56</div><div class="a" style="left:936px;top:948px;width:2px;height:17px;background:#9e9e9e;"></div><div class="a t" style="left:940px;top:934.69px;font-size:11px;line-height:11px;color:#9a9a9a;">58</div><div class="a" style="left:968px;top:948px;width:2px;height:17px;background:#9e9e9e;"></div><div class="a t" style="left:972px;top:934.69px;font-size:11px;line-height:11px;color:#9a9a9a;">60</div><div class="a" style="left:1000px;top:948px;width:2px;height:17px;background:#9e9e9e;"></div><div class="a t" style="left:1004px;top:934.69px;font-size:11px;line-height:11px;color:#9a9a9a;">62</div><div class="a" style="left:1031px;top:948px;width:2px;height:17px;background:#9e9e9e;"></div><div class="a t" style="left:1035px;top:934.69px;font-size:11px;line-height:11px;color:#9a9a9a;">64</div><div class="a" style="left:1063px;top:948px;width:2px;height:17px;background:#9e9e9e;"></div><div class="a t" style="left:1067px;top:934.69px;font-size:11px;line-height:11px;color:#9a9a9a;">66</div><div class="a" style="left:1094px;top:948px;width:2px;height:17px;background:#9e9e9e;"></div><div class="a t" style="left:1098px;top:934.69px;font-size:11px;line-height:11px;color:#9a9a9a;">68</div><div class="a" style="left:1126px;top:948px;width:2px;height:17px;background:#9e9e9e;"></div><div class="a t" style="left:1130px;top:934.69px;font-size:11px;line-height:11px;color:#9a9a9a;">70</div><div class="a" style="left:1158px;top:948px;width:2px;height:17px;background:#9e9e9e;"></div><div class="a t" style="left:1162px;top:934.69px;font-size:11px;line-height:11px;color:#9a9a9a;">72</div><div class="a" style="left:1189px;top:948px;width:2px;height:17px;background:#9e9e9e;"></div><div class="a t" style="left:1193px;top:934.69px;font-size:11px;line-height:11px;color:#9a9a9a;">74</div><div class="a" style="left:1221px;top:948px;width:2px;height:17px;background:#9e9e9e;"></div><div class="a t" style="left:1225px;top:934.69px;font-size:11px;line-height:11px;color:#9a9a9a;">76</div><div class="a" style="left:1252px;top:948px;width:2px;height:17px;background:#9e9e9e;"></div><div class="a t" style="left:1256px;top:934.69px;font-size:11px;line-height:11px;color:#9a9a9a;">78</div><div class="a" style="left:1284px;top:948px;width:2px;height:17px;background:#9e9e9e;"></div><div class="a t" style="left:1288px;top:934.69px;font-size:11px;line-height:11px;color:#9a9a9a;">80</div><div class="a" style="left:1316px;top:948px;width:2px;height:17px;background:#9e9e9e;"></div><div class="a t" style="left:1320px;top:934.69px;font-size:11px;line-height:11px;color:#9a9a9a;">82</div><div class="a" style="left:1347px;top:948px;width:2px;height:17px;background:#9e9e9e;"></div><div class="a t" style="left:1351px;top:934.69px;font-size:11px;line-height:11px;color:#9a9a9a;">84</div><div class="a" style="left:1379px;top:948px;width:2px;height:17px;background:#9e9e9e;"></div><div class="a t" style="left:1383px;top:934.69px;font-size:11px;line-height:11px;color:#9a9a9a;">86</div><div class="a" style="left:1410px;top:948px;width:2px;height:17px;background:#9e9e9e;"></div><div class="a t" style="left:1414px;top:934.69px;font-size:11px;line-height:11px;color:#9a9a9a;">88</div><div class="a" style="left:1442px;top:948px;width:2px;height:17px;background:#9e9e9e;"></div><div class="a t" style="left:1446px;top:934.69px;font-size:11px;line-height:11px;color:#9a9a9a;">90</div><div class="a" style="left:1474px;top:948px;width:2px;height:17px;background:#9e9e9e;"></div><div class="a t" style="left:1478px;top:934.69px;font-size:11px;line-height:11px;color:#9a9a9a;">92</div><div class="a" style="left:1505px;top:948px;width:2px;height:17px;background:#9e9e9e;"></div><div class="a t" style="left:1509px;top:934.69px;font-size:11px;line-height:11px;color:#9a9a9a;">94</div><div class="a" style="left:1537px;top:948px;width:2px;height:17px;background:#9e9e9e;"></div><div class="a t" style="left:1541px;top:934.69px;font-size:11px;line-height:11px;color:#9a9a9a;">96</div><div class="a" style="left:1568px;top:948px;width:2px;height:17px;background:#9e9e9e;"></div><div class="a t" style="left:1572px;top:934.69px;font-size:11px;line-height:11px;color:#9a9a9a;">98</div><div class="a" style="left:1602px;top:935px;width:14px;height:31px;background:#5a5a5a;"></div><div class="a" style="left:1600px;top:948px;width:2px;height:17px;background:#a8a8a8;"></div><div class="a t" style="left:1605px;top:934.69px;font-size:11px;line-height:11px;color:#8a8a8a;">100</div><div class="a t" style="left:1605px;top:951.69px;font-size:11px;line-height:11px;color:#ffffff;">100</div><div class="a" style="left:1632px;top:941px;width:88px;height:18px;background:#2b2b2b;border-radius:3px"></div><div class="a t" style="left:1637px;top:944.84px;font-size:12px;line-height:12px;color:#e0e0e0;">100</div><svg class="a" style="left:1731px;top:941px;" width="18" height="17" viewBox="0 0 18 17"><rect x="0" y="1" width="2" height="15" fill="#c8c8c8"/><polygon points="2,8.5 9,2 9,15" fill="#c8c8c8"/><polygon points="9,8.5 16,2 16,15" fill="#c8c8c8"/></svg><svg class="a" style="left:1755px;top:941px;" width="14" height="17" viewBox="0 0 14 17"><rect x="0" y="1" width="2" height="15" fill="#c8c8c8"/><polygon points="3,8.5 13,2 13,15" fill="#c8c8c8"/></svg><svg class="a" style="left:1778px;top:940px;" width="14" height="19" viewBox="0 0 14 19"><rect x="0" y="3" width="3" height="13" fill="#e8944a"/><rect x="1" y="0" width="1" height="19" fill="#e8944a"/><polygon points="4,9.5 13,3 13,16" fill="#c8c8c8"/></svg><svg class="a" style="left:1800px;top:941px;" width="13" height="17" viewBox="0 0 13 17"><polygon points="0,8.5 13,1 13,16" fill="#c8c8c8"/></svg><svg class="a" style="left:1823px;top:941px;" width="13" height="17" viewBox="0 0 13 17"><polygon points="13,8.5 0,1 0,16" fill="#c8c8c8"/></svg><svg class="a" style="left:1845px;top:940px;" width="14" height="19" viewBox="0 0 14 19"><rect x="10" y="3" width="3" height="13" fill="#e8944a"/><rect x="11" y="0" width="1" height="19" fill="#e8944a"/><polygon points="9,9.5 0,3 0,16" fill="#c8c8c8"/></svg><svg class="a" style="left:1868px;top:941px;" width="14" height="17" viewBox="0 0 14 17"><rect x="12" y="1" width="2" height="15" fill="#c8c8c8"/><polygon points="11,8.5 1,2 1,15" fill="#c8c8c8"/></svg><svg class="a" style="left:1891px;top:941px;" width="18" height="17" viewBox="0 0 18 17"><rect x="16" y="1" width="2" height="15" fill="#c8c8c8"/><polygon points="16,8.5 9,2 9,15" fill="#c8c8c8"/><polygon points="9,8.5 2,2 2,15" fill="#c8c8c8"/></svg><svg class="a" style="left:3px;top:976px;" width="6" height="26" viewBox="0 0 6 26"><rect x="0" y="0" width="1" height="1" fill="#777"/><rect x="3" y="0" width="1" height="1" fill="#777"/><rect x="0" y="3" width="1" height="1" fill="#777"/><rect x="3" y="3" width="1" height="1" fill="#777"/><rect x="0" y="6" width="1" height="1" fill="#777"/><rect x="3" y="6" width="1" height="1" fill="#777"/><rect x="0" y="9" width="1" height="1" fill="#777"/><rect x="3" y="9" width="1" height="1" fill="#777"/><rect x="0" y="12" width="1" height="1" fill="#777"/><rect x="3" y="12" width="1" height="1" fill="#777"/><rect x="0" y="15" width="1" height="1" fill="#777"/><rect x="3" y="15" width="1" height="1" fill="#777"/><rect x="0" y="18" width="1" height="1" fill="#777"/><rect x="3" y="18" width="1" height="1" fill="#777"/><rect x="0" y="21" width="1" height="1" fill="#777"/><rect x="3" y="21" width="1" height="1" fill="#777"/><rect x="0" y="24" width="1" height="1" fill="#777"/><rect x="3" y="24" width="1" height="1" fill="#777"/></svg><div class="a" style="left:14px;top:976px;width:88px;height:25px;background:#2b2b2b;border-radius:3px"></div><div class="a t" style="left:19px;top:982.84px;font-size:12px;line-height:12px;color:#e0e0e0;">0</div><div class="a" style="left:110px;top:976px;width:88px;height:25px;background:#2b2b2b;border-radius:3px"></div><div class="a t" style="left:116px;top:982.84px;font-size:12px;line-height:12px;color:#e0e0e0;">0</div><div class="a" style="left:205px;top:976px;width:920px;height:25px;background:#373737;border-radius:2px"></div><div class="a" style="left:210px;top:978px;width:159px;height:21px;background:#5b5b5b;border-radius:5px"></div><div class="a" style="left:214px;top:981px;width:15px;height:14px;background:#9a9a9a;border-radius:3px"></div><div class="a" style="left:351px;top:981px;width:15px;height:14px;background:#9a9a9a;border-radius:3px"></div><div class="a t" style="left:233px;top:983.69px;font-size:11px;line-height:11px;color:#d0d0d0;">0</div><div class="a t" style="left:329px;top:983.69px;font-size:11px;line-height:11px;color:#d0d0d0;">100</div><div class="a" style="left:1132px;top:976px;width:88px;height:25px;background:#2b2b2b;border-radius:3px"></div><div class="a t" style="left:1137px;top:982.84px;font-size:12px;line-height:12px;color:#e0e0e0;">100</div><div class="a" style="left:1228px;top:976px;width:88px;height:25px;background:#2b2b2b;border-radius:3px"></div><div class="a t" style="left:1233px;top:982.84px;font-size:12px;line-height:12px;color:#e0e0e0;">680</div><svg class="a" style="left:1320px;top:978px;" width="4" height="22" viewBox="0 0 4 22"><rect x="1.5" y="0" width="1" height="22" fill="#7a7a7a"/><rect x="0.5" y="6.2" width="3" height="9.7" rx="1" fill="#7a7a7a"/></svg><svg class="a" style="left:1337px;top:978px;" width="15" height="19" viewBox="0 0 15 19"><path d="M0 4 H9 V19 L4.5 15 L0 19 Z" fill="#e8944a"/><path d="M11 1 V9 M7 5 H15" stroke="#ddd" stroke-width="1.8"/></svg><svg class="a" style="left:1363px;top:978px;" width="4" height="22" viewBox="0 0 4 22"><rect x="1.5" y="0" width="1" height="22" fill="#7a7a7a"/><rect x="0.5" y="6.2" width="3" height="9.7" rx="1" fill="#7a7a7a"/></svg><svg class="a" style="left:1381px;top:985px;" width="9" height="6" viewBox="0 0 9 6"><polygon points="0,0 9,0 4.5,6" fill="#8c8c8c"/></svg><div class="a" style="left:1397px;top:977px;width:101px;height:23px;background:#3e3e3e;border:1px solid #383838;border-radius:3px"></div><div class="a t" style="left:1403px;top:982.84px;font-size:12px;line-height:12px;color:#cfcfcf;;transform-origin:0 0;transform:scaleX(0.9383)">No Character Set</div><svg class="a" style="left:1510px;top:985px;" width="9" height="6" viewBox="0 0 9 6"><polygon points="0,0 9,0 4.5,6" fill="#8c8c8c"/></svg><div class="a" style="left:1526px;top:977px;width:102px;height:23px;background:#3e3e3e;border:1px solid #383838;border-radius:3px"></div><div class="a t" style="left:1532px;top:982.84px;font-size:12px;line-height:12px;color:#cfcfcf;;transform-origin:0 0;transform:scaleX(0.9402)">No Anim Layer</div><svg class="a" style="left:1636px;top:978px;" width="4" height="22" viewBox="0 0 4 22"><rect x="1.5" y="0" width="1" height="22" fill="#7a7a7a"/><rect x="0.5" y="6.2" width="3" height="9.7" rx="1" fill="#7a7a7a"/></svg><div class="a" style="left:1652px;top:978px;width:95px;height:19px;background:#5a5a5a;border-radius:2px"></div><div class="a" style="left:1726px;top:978px;width:1px;height:19px;background:#4e4e4e;"></div><div class="a t" style="left:1655px;top:982.84px;font-size:12px;line-height:12px;color:#cfcfcf;;transform-origin:0 0;transform:scaleX(0.9785)">24 fps</div><svg class="a" style="left:1732px;top:985px;" width="10" height="6" viewBox="0 0 10 6"><polygon points="0,0 10,0 5.0,6" fill="#c8c8c8"/></svg><svg class="a" style="left:1760px;top:980px;" width="17" height="15" viewBox="0 0 17 15"><path d="M3 6 A3.5 3.5 0 0 1 6.5 2.5 H15 M14 9 A3.5 3.5 0 0 1 10.5 12.5 H2" fill="none" stroke="#c8c8c8" stroke-width="2"/><polygon points="12,0 16,2.5 12,5" fill="#c8c8c8"/><polygon points="5,10 1,12.5 5,15" fill="#c8c8c8"/></svg><svg class="a" style="left:1788px;top:979px;" width="19" height="18" viewBox="0 0 19 18"><rect x="1" y="6" width="14" height="11" fill="none" stroke="#e8944a" stroke-width="1.5"/><path d="M1 9 H15 M1 14 H15" stroke="#e8944a" stroke-width="1"/><rect x="3" y="10" width="4" height="3" fill="#e8944a"/><rect x="9" y="10" width="4" height="3" fill="#e8944a"/><polygon points="12,0 19,4 12,8" fill="#c8c8c8"/></svg><svg class="a" style="left:1818px;top:978px;" width="4" height="22" viewBox="0 0 4 22"><rect x="1.5" y="0" width="1" height="22" fill="#7a7a7a"/><rect x="0.5" y="6.2" width="3" height="9.7" rx="1" fill="#7a7a7a"/></svg><svg class="a" style="left:1833px;top:980px;" width="19" height="16" viewBox="0 0 19 16"><polygon points="0,5 4,5 9,1 9,15 4,11 0,11" fill="#c8c8c8"/><path d="M12 4 Q14 8 12 12 M15 2 Q18 8 15 14" fill="none" stroke="#c8c8c8" stroke-width="1.4"/></svg><div class="a" style="left:1860px;top:977px;width:22px;height:22px;background:#d8262c;"></div><svg class="a" style="left:1862px;top:979px;" width="18" height="18" viewBox="0 0 18 18"><path d="M3 6 A7 7 0 0 1 15 5 M15 12 A7 7 0 0 1 3 13" fill="none" stroke="#fff" stroke-width="1.6"/><polygon points="13,2 17,6 12,7" fill="#fff"/><polygon points="5,16 1,12 6,11" fill="#fff"/><rect x="8" y="4" width="2.5" height="10" fill="#f0f0f0"/><rect x="5" y="8" width="8" height="2" fill="#fff"/></svg><svg class="a" style="left:1889px;top:978px;" width="20" height="20" viewBox="0 0 20 20"><circle cx="5" cy="5" r="3.2" fill="none" stroke="#c8c8c8" stroke-width="2"/><circle cx="15" cy="6" r="2" fill="#e8944a"/><path d="M14 9 L11 14 L6 14 M12 12 L15 15 L13 19 M14 9 L18 12" fill="none" stroke="#e8944a" stroke-width="2.2"/></svg><svg class="a" style="left:3px;top:1009px;" width="6" height="29" viewBox="0 0 6 29"><rect x="0" y="0" width="1" height="1" fill="#777"/><rect x="3" y="0" width="1" height="1" fill="#777"/><rect x="0" y="3" width="1" height="1" fill="#777"/><rect x="3" y="3" width="1" height="1" fill="#777"/><rect x="0" y="6" width="1" height="1" fill="#777"/><rect x="3" y="6" width="1" height="1" fill="#777"/><rect x="0" y="9" width="1" height="1" fill="#777"/><rect x="3" y="9" width="1" height="1" fill="#777"/><rect x="0" y="12" width="1" height="1" fill="#777"/><rect x="3" y="12" width="1" height="1" fill="#777"/><rect x="0" y="15" width="1" height="1" fill="#777"/><rect x="3" y="15" width="1" height="1" fill="#777"/><rect x="0" y="18" width="1" height="1" fill="#777"/><rect x="3" y="18" width="1" height="1" fill="#777"/><rect x="0" y="21" width="1" height="1" fill="#777"/><rect x="3" y="21" width="1" height="1" fill="#777"/><rect x="0" y="24" width="1" height="1" fill="#777"/><rect x="3" y="24" width="1" height="1" fill="#777"/><rect x="0" y="27" width="1" height="1" fill="#777"/><rect x="3" y="27" width="1" height="1" fill="#777"/></svg><svg class="a" style="left:14px;top:1016px;" width="16" height="16" viewBox="0 0 16 16"><circle cx="8" cy="8" r="8" fill="#7db73a"/><path d="M5 6 A3 3 0 1 1 8.5 9 V10.5" fill="none" stroke="#333" stroke-width="1.8"/><circle cx="8.5" cy="13" r="1.1" fill="#333"/></svg><div class="a t" style="left:38px;top:1019.11px;font-size:10.5px;line-height:10.5px;color:#e0e0e0;;transform-origin:0 0;transform:scaleX(0.9334)">Rotate Tool: Select an object to rotate.</div><div class="a" style="left:815px;top:1009px;width:2px;height:29px;background:#3a3a3a;"></div><svg class="a" style="left:820px;top:1012px;" width="3" height="24" viewBox="0 0 3 24"><rect x="0" y="0" width="1" height="1" fill="#777"/><rect x="0" y="3" width="1" height="1" fill="#777"/><rect x="0" y="6" width="1" height="1" fill="#777"/><rect x="0" y="9" width="1" height="1" fill="#777"/><rect x="0" y="12" width="1" height="1" fill="#777"/><rect x="0" y="15" width="1" height="1" fill="#777"/><rect x="0" y="18" width="1" height="1" fill="#777"/><rect x="0" y="21" width="1" height="1" fill="#777"/></svg><div class="a t" style="left:842px;top:1018.69px;font-size:11px;line-height:11px;color:#e0e0e0;;transform-origin:0 0;transform:scaleX(0.9282)">MEL</div><div class="a" style="left:876px;top:1013px;width:409px;height:21px;background:#2b2b2b;border-radius:2px"></div><div class="a" style="left:1286px;top:1013px;width:7px;height:21px;background:#3e3e3e;"></div><svg class="a" style="left:1289px;top:1016px;" width="3" height="16" viewBox="0 0 3 16"><rect x="0" y="0" width="1" height="1" fill="#777"/><rect x="0" y="3" width="1" height="1" fill="#777"/><rect x="0" y="6" width="1" height="1" fill="#777"/><rect x="0" y="9" width="1" height="1" fill="#777"/><rect x="0" y="12" width="1" height="1" fill="#777"/><rect x="0" y="15" width="1" height="1" fill="#777"/></svg><div class="a" style="left:1293px;top:1013px;width:594px;height:21px;background:#2b2b2b;border-radius:2px"></div><svg class="a" style="left:1893px;top:1015px;" width="19" height="19" viewBox="0 0 19 19"><rect x="0" y="0" width="19" height="19" fill="#c8c8c8"/><rect x="1" y="4" width="17" height="14" fill="#888"/><path d="M2 2 H4 M6 2 H8" stroke="#444"/><text x="9.5" y="15" font-size="10" font-weight="bold" font-family="Liberation Mono" text-anchor="middle" fill="#222">{;}</text></svg><svg class="a" style="left:16px;top:1052px;" width="17" height="17" viewBox="0 0 17 17"><g fill="#f0f0f0"><path d="M0 2.3 L7 1.3 V8 H0 Z"/><path d="M8 1.1 L17 0 V8 H8 Z"/><path d="M0 9 H7 V15.7 L0 14.7 Z"/><path d="M8 9 H17 V17 L8 15.9 Z"/></g></svg><div class="a" style="left:48px;top:1040px;width:288px;height:40px;background:#323232;border:1px solid #4a4a4a;border-bottom:none"></div><svg class="a" style="left:60px;top:1051px;" width="17" height="18" viewBox="0 0 17 18"><circle cx="10.5" cy="6.5" r="5.5" fill="none" stroke="#e0e0e0" stroke-width="1.4"/><path d="M6.5 10.5 L1 16.5" stroke="#e0e0e0" stroke-width="1.6"/></svg><div class="a t" style="left:88px;top:1054.30px;font-size:15px;line-height:15px;color:#d8d8d8;;transform-origin:0 0;transform:scaleX(0.9730)">Type here to search</div><svg class="a" style="left:255px;top:1045px;" width="81" height="35" viewBox="0 0 81 35"><path d="M0 35 Q20 24 40 28 Q60 22 81 28 V35 Z" fill="#8cbb4c"/><path d="M12 30 L40 2 Q45 0 50 3 L72 24 Q60 30 40 30 Z" fill="#5a7fc0"/><path d="M36 6 L40 2 Q45 0 50 3 L55 8 Q48 10 44 7 Q40 10 36 6 Z" fill="#e8e0ef"/><g fill="#f2a0c0"><circle cx="58" cy="15" r="6"/><circle cx="66" cy="29" r="5"/><circle cx="76" cy="10" r="4"/></g><path d="M60 22 L80 32" stroke="#8a5a3a" stroke-width="1.5"/></svg><svg class="a" style="left:351px;top:1051px;" width="20" height="18" viewBox="0 0 20 18"><rect x="2" y="3" width="11" height="12" fill="none" stroke="#f0f0f0" stroke-width="1.4"/><path d="M0 1 H15 M0 17 H15" stroke="#f0f0f0" stroke-width="1.4"/><path d="M17 1 V4 M17 7 V17" stroke="#f0f0f0" stroke-width="1.5"/></svg><svg class="a" style="left:398px;top:1046px;" width="27" height="28" viewBox="0 0 27 28"><defs><linearGradient id="edg" x1="0" y1="0" x2="1" y2="1"><stop offset="0" stop-color="#3bd08f"/><stop offset="0.5" stop-color="#1a9ad6"/><stop offset="1" stop-color="#0c59a4"/></linearGradient></defs><circle cx="13.5" cy="14" r="13" fill="url(#edg)"/><path d="M7 17 Q8 9 15 9 Q21 9 21 14 Q16 12 12 15 Q10 19 15 22 Q8 22 7 17 Z" fill="#0b3d7a"/></svg><svg class="a" style="left:447px;top:1050px;" width="25" height="20" viewBox="0 0 25 20"><path d="M0 2 H9 L11 4 H25 V20 H0 Z" fill="#f2b93a"/><path d="M0 7 H25 V20 H0 Z" fill="#ffd45c"/><rect x="8" y="13" width="9" height="5" fill="#1c8ad8"/></svg><svg class="a" style="left:496px;top:1046px;" width="25" height="26" viewBox="0 0 25 26"><path d="M2 8 H23 V23 Q23 25 21 25 H4 Q2 25 2 23 Z" fill="#e8f0f8"/><path d="M8 8 V5 Q8 2 12.5 2 Q17 2 17 5 V8" fill="none" stroke="#4aa8e8" stroke-width="1.8"/><rect x="7" y="11" width="5" height="5" fill="#f25022"/><rect x="13" y="11" width="5" height="5" fill="#7fba00"/><rect x="7" y="17" width="5" height="5" fill="#00a4ef"/><rect x="13" y="17" width="5" height="5" fill="#ffb900"/></svg><svg class="a" style="left:545px;top:1046px;" width="26" height="27" viewBox="0 0 26 27"><rect x="0" y="0" width="26" height="27" rx="2" fill="#f4f4f4"/><path d="M6 6 L18 5 M14 5 L8 22 L20 20 M5 14 Q12 10 22 13" fill="none" stroke="#222" stroke-width="2.2"/></svg><svg class="a" style="left:595px;top:1046px;" width="27" height="28" viewBox="0 0 27 28"><circle cx="13.5" cy="13.5" r="13" fill="#db4437"/><path d="M13.5 13.5 L2.2 7 A13 13 0 0 0 7 25 Z" fill="#0f9d58"/><path d="M13.5 13.5 L7 25 A13 13 0 0 0 26.5 13.5 Z" fill="#ffcd40"/><circle cx="13.5" cy="13.5" r="6" fill="#fff"/><circle cx="13.5" cy="13.5" r="4.6" fill="#4285f4"/><circle cx="21" cy="21" r="6.5" fill="#555"/><circle cx="21" cy="19" r="2.5" fill="#d8b090"/><path d="M16 26 Q21 21 26 26" fill="#334"/></svg><svg class="a" style="left:645px;top:1049px;" width="23" height="22" viewBox="0 0 23 22"><rect x="0" y="0" width="23" height="22" rx="3" fill="#001e36"/><text x="11.5" y="16" font-size="13" font-weight="bold" font-family="Liberation Sans" text-anchor="middle" fill="#31a8ff">Ps</text></svg><svg class="a" style="left:693px;top:1049px;" width="23" height="22" viewBox="0 0 23 22"><rect x="0" y="0" width="23" height="22" rx="3" fill="#00005b"/><text x="11.5" y="16" font-size="13" font-weight="bold" font-family="Liberation Sans" text-anchor="middle" fill="#9999ff">Pr</text></svg><svg class="a" style="left:742px;top:1049px;" width="23" height="22" viewBox="0 0 23 22"><rect x="0" y="0" width="23" height="22" rx="3" fill="#00005b"/><text x="11.5" y="16" font-size="13" font-weight="bold" font-family="Liberation Sans" text-anchor="middle" fill="#9999ff">Ae</text></svg><svg class="a" style="left:791px;top:1049px;" width="23" height="22" viewBox="0 0 23 22"><rect x="0" y="0" width="23" height="22" rx="3" fill="#1e3000"/><text x="11.5" y="16" font-size="13" font-weight="bold" font-family="Liberation Sans" text-anchor="middle" fill="#86c928">Pt</text></svg><div class="a" style="left:828px;top:1040px;width:48px;height:40px;background:#3c383f;"></div><svg class="a" style="left:840px;top:1048px;" width="23" height="24" viewBox="0 0 23 24"><path d="M2 0 L20 0 L22 2 L22 24 L4 24 L2 22 Z" fill="#3a9fcf"/><path d="M0 3 L2 0 L2 19 L0 22 Z" fill="#2a80ad"/><rect x="4" y="17" width="18" height="7" fill="#2c6f91"/><text x="12" y="14" font-size="12" font-weight="bold" fill="#fff" text-anchor="middle" font-family="Liberation Sans">M</text></svg><div class="a" style="left:440px;top:1078px;width:40px;height:2px;background:#a8a8a8;"></div><div class="a" style="left:585px;top:1078px;width:42px;height:2px;background:#a8a8a8;"></div><div class="a" style="left:685px;top:1078px;width:40px;height:2px;background:#a8a8a8;"></div><div class="a" style="left:828px;top:1078px;width:48px;height:2px;background:#a8a8a8;"></div><svg class="a" style="left:1524px;top:1051px;" width="19" height="19" viewBox="0 0 19 19"><defs><radialGradient id="sun" cx="0.4" cy="0.35" r="0.7"><stop offset="0" stop-color="#ffc03a"/><stop offset="1" stop-color="#f07010"/></radialGradient></defs><circle cx="9.5" cy="9.5" r="9.5" fill="url(#sun)"/></svg><div class="a t" style="left:1553px;top:1054.15px;font-size:14px;line-height:14px;color:#f0f0f0;;transform-origin:0 0;transform:scaleX(0.9750)">27°C</div><div class="a t" style="left:1591px;top:1054.15px;font-size:14px;line-height:14px;color:#f0f0f0;;transform-origin:0 0;transform:scaleX(0.9949)">Sunny</div><svg class="a" style="left:1646px;top:1055px;" width="14" height="8" viewBox="0 0 14 8"><path d="M1 7 L7 1 L13 7" fill="none" stroke="#f0f0f0" stroke-width="1.4"/></svg><svg class="a" style="left:1671px;top:1052px;" width="13" height="17" viewBox="0 0 13 17"><rect x="1" y="3" width="8" height="11" rx="2" fill="none" stroke="#f0f0f0" stroke-width="1.3"/><path d="M9 6 L12 4 V13 L9 11" fill="none" stroke="#f0f0f0" stroke-width="1.2"/><path d="M5 0 V3" stroke="#f0f0f0"/></svg><svg class="a" style="left:1693px;top:1054px;" width="16" height="12" viewBox="0 0 16 12"><rect x="1" y="3" width="13" height="8" fill="none" stroke="#f0f0f0" stroke-width="1.3"/><rect x="3" y="5" width="9" height="4" fill="#f0f0f0"/><path d="M3 0 L6 3 M7 0 L5 2" stroke="#f0f0f0"/></svg><svg class="a" style="left:1719px;top:1052px;" width="17" height="16" viewBox="0 0 17 16"><path d="M1 6 A11 11 0 0 1 16 6 M3.5 9 A7.5 7.5 0 0 1 13.5 9 M6 12 A4 4 0 0 1 11 12" fill="none" stroke="#f0f0f0" stroke-width="1.3"/><circle cx="8.5" cy="14.5" r="1.2" fill="#f0f0f0"/></svg><svg class="a" style="left:1741px;top:1052px;" width="18" height="16" viewBox="0 0 18 16"><polygon points="0,5 4,5 9,1 9,15 4,11 0,11" fill="none" stroke="#f0f0f0" stroke-width="1.2"/><path d="M12 4 Q14 8 12 12 M15 2 Q18 8 15 14" fill="none" stroke="#f0f0f0" stroke-width="1.2"/></svg><div class="a t" style="left:1767px;top:1054.84px;font-size:12px;line-height:12px;color:#f0f0f0;;transform-origin:0 0;transform:scaleX(0.8841)">ENG</div><div class="a t" style="left:1818px;top:1044.84px;font-size:12px;line-height:12px;color:#f0f0f0;;transform-origin:0 0;transform:scaleX(0.9324)">12:07</div><div class="a t" style="left:1803px;top:1062.84px;font-size:12px;line-height:12px;color:#f0f0f0;;transform-origin:0 0;transform:scaleX(0.9611)">23-02-2023</div><svg class="a" style="left:1878px;top:1050px;" width="24" height="24" viewBox="0 0 24 24"><path d="M2 2 H18 V14 H8 L4 18 V14 H2 Z" fill="#f0f0f0"/><path d="M5 6 H15 M5 9 H15" stroke="#222"/><circle cx="17" cy="17" r="6" fill="#222" stroke="#f0f0f0" stroke-width="1.2"/><text x="17" y="21" font-size="9" font-family="Liberation Sans" text-anchor="middle" fill="#f0f0f0">1</text></svg>
</body></html>
